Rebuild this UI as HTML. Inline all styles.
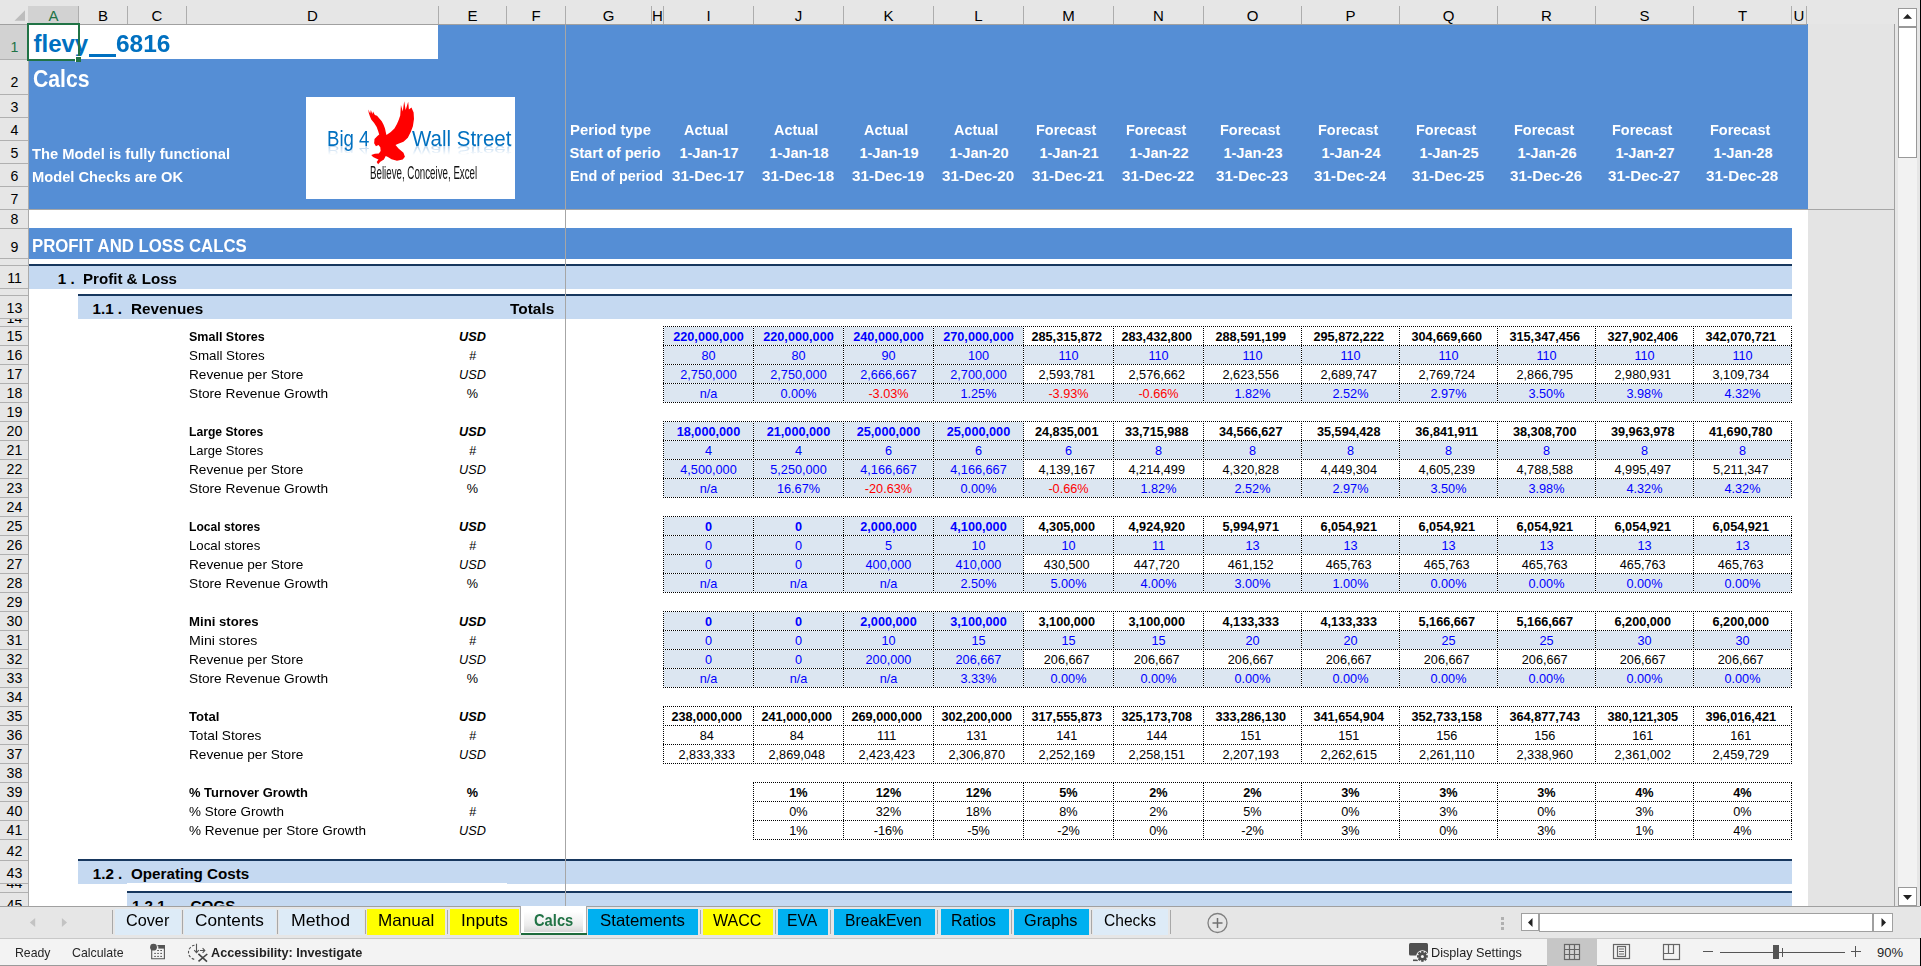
<!DOCTYPE html>
<html><head><meta charset="utf-8"><style>
html,body{margin:0;padding:0;width:1921px;height:966px;overflow:hidden;background:#fff;}
body{position:relative;font-family:"Liberation Sans",sans-serif;}
body>div{position:absolute;box-sizing:content-box;}
.t{white-space:nowrap;line-height:normal;}
.dh{height:0;border-top:1px dotted #000;}
.dv{width:0;border-left:1px dotted #000;}
</style></head><body>
<div style="left:28px;top:24px;width:1780px;height:882px;background:#FFFFFF;"></div>
<div style="left:1808px;top:24px;width:86px;height:882px;background:#E4E4E4;"></div>
<div style="left:28px;top:24px;width:1780px;height:185px;background:#558ED5;"></div>
<div style="left:28px;top:24px;width:410px;height:35px;background:#FFFFFF;"></div>
<div style="left:28px;top:228px;width:1764px;height:31px;background:#558ED5;"></div>
<div style="left:28px;top:264px;width:1764px;height:2px;background:#17375E;"></div>
<div style="left:28px;top:266px;width:1764px;height:23px;background:#C5D9F1;"></div>
<div style="left:78px;top:294px;width:1714px;height:2px;background:#17375E;"></div>
<div style="left:78px;top:296px;width:1714px;height:23px;background:#C5D9F1;"></div>
<div style="left:78px;top:859px;width:1714px;height:2px;background:#17375E;"></div>
<div style="left:78px;top:861px;width:1714px;height:22px;background:#C5D9F1;"></div>
<div style="left:78px;top:883px;width:49px;height:1px;background:#C5D9F1;"></div>
<div style="left:507px;top:883px;width:1285px;height:1px;background:#C5D9F1;"></div>
<div style="left:127px;top:891px;width:1665px;height:2px;background:#17375E;"></div>
<div style="left:127px;top:893px;width:1665px;height:13px;background:#C5D9F1;"></div>
<div class="t" style="left:33.50px;top:30.48px;font-size:24px;color:#0070C0;font-weight:bold;">flevy</div>
<div style="left:89px;top:54px;width:27px;height:3px;background:#0070C0;"></div>
<div class="t" style="left:116.40px;top:30.48px;font-size:24px;color:#0070C0;font-weight:bold;transform:scaleX(1.0207);transform-origin:0 0;">6816</div>
<div class="t" style="left:33.20px;top:65.93px;font-size:23.5px;color:#FFFFFF;font-weight:bold;transform:scaleX(0.9010);transform-origin:0 0;">Calcs</div>
<div class="t" style="left:32.00px;top:145.12px;font-size:15px;color:#FFFFFF;font-weight:bold;transform:scaleX(0.9818);transform-origin:0 0;">The Model is fully functional</div>
<div class="t" style="left:32.00px;top:168.12px;font-size:15px;color:#FFFFFF;font-weight:bold;transform:scaleX(0.9791);transform-origin:0 0;">Model Checks are OK</div>
<div class="t" style="left:32.00px;top:235.76px;font-size:17.5px;color:#FFFFFF;font-weight:bold;transform:scaleX(0.9587);transform-origin:0 0;">PROFIT AND LOSS CALCS</div>
<div class="t" style="left:57.80px;top:270.24px;font-size:15.2px;color:#000;font-weight:bold;">1 .</div>
<div class="t" style="left:82.60px;top:270.24px;font-size:15.2px;color:#000;font-weight:bold;transform:scaleX(0.9938);transform-origin:0 0;">Profit &amp; Loss</div>
<div class="t" style="left:92.50px;top:300.04px;font-size:15.2px;color:#000;font-weight:bold;">1.1 .</div>
<div class="t" style="left:131.20px;top:300.04px;font-size:15.2px;color:#000;font-weight:bold;transform:scaleX(1.0067);transform-origin:0 0;">Revenues</div>
<div class="t" style="left:510.00px;top:300.04px;font-size:15.2px;color:#000;font-weight:bold;transform:scaleX(1.0152);transform-origin:0 0;">Totals</div>
<div class="t" style="left:92.75px;top:865.24px;font-size:15.2px;color:#000;font-weight:bold;">1.2 .</div>
<div class="t" style="left:131.00px;top:865.24px;font-size:15.2px;color:#000;font-weight:bold;">Operating Costs</div>
<div class="t" style="left:131.90px;top:897.24px;font-size:15.2px;color:#000;font-weight:bold;">1.2.1 .</div>
<div class="t" style="left:190.60px;top:897.24px;font-size:15.2px;color:#000;font-weight:bold;">COGS</div>
<div class="t" style="left:569.50px;top:121.79px;font-size:14.6px;color:#FFFFFF;font-weight:bold;transform:scaleX(1.0187);transform-origin:0 0;">Period type</div>
<div class="t" style="left:569.50px;top:144.79px;font-size:14.6px;color:#FFFFFF;font-weight:bold;">Start of perio</div>
<div class="t" style="left:569.50px;top:168.04px;font-size:14.6px;color:#FFFFFF;font-weight:bold;transform:scaleX(0.9885);transform-origin:0 0;">End of period</div>
<div class="t" style="left:684.11px;top:121.79px;font-size:14.6px;color:#FFFFFF;font-weight:bold;transform:scaleX(0.9900);transform-origin:0 0;">Actual</div>
<div class="t" style="left:679.38px;top:144.79px;font-size:14.6px;color:#FFFFFF;font-weight:bold;">1-Jan-17</div>
<div class="t" style="left:672.30px;top:168.04px;font-size:14.6px;color:#FFFFFF;font-weight:bold;transform:scaleX(1.0494);transform-origin:0 0;">31-Dec-17</div>
<div class="t" style="left:774.11px;top:121.79px;font-size:14.6px;color:#FFFFFF;font-weight:bold;transform:scaleX(0.9900);transform-origin:0 0;">Actual</div>
<div class="t" style="left:769.38px;top:144.79px;font-size:14.6px;color:#FFFFFF;font-weight:bold;">1-Jan-18</div>
<div class="t" style="left:762.30px;top:168.04px;font-size:14.6px;color:#FFFFFF;font-weight:bold;transform:scaleX(1.0494);transform-origin:0 0;">31-Dec-18</div>
<div class="t" style="left:864.11px;top:121.79px;font-size:14.6px;color:#FFFFFF;font-weight:bold;transform:scaleX(0.9900);transform-origin:0 0;">Actual</div>
<div class="t" style="left:859.38px;top:144.79px;font-size:14.6px;color:#FFFFFF;font-weight:bold;">1-Jan-19</div>
<div class="t" style="left:852.30px;top:168.04px;font-size:14.6px;color:#FFFFFF;font-weight:bold;transform:scaleX(1.0494);transform-origin:0 0;">31-Dec-19</div>
<div class="t" style="left:954.11px;top:121.79px;font-size:14.6px;color:#FFFFFF;font-weight:bold;transform:scaleX(0.9900);transform-origin:0 0;">Actual</div>
<div class="t" style="left:949.38px;top:144.79px;font-size:14.6px;color:#FFFFFF;font-weight:bold;">1-Jan-20</div>
<div class="t" style="left:942.30px;top:168.04px;font-size:14.6px;color:#FFFFFF;font-weight:bold;transform:scaleX(1.0494);transform-origin:0 0;">31-Dec-20</div>
<div class="t" style="left:1036.07px;top:121.79px;font-size:14.6px;color:#FFFFFF;font-weight:bold;transform:scaleX(0.9900);transform-origin:0 0;">Forecast</div>
<div class="t" style="left:1039.38px;top:144.79px;font-size:14.6px;color:#FFFFFF;font-weight:bold;">1-Jan-21</div>
<div class="t" style="left:1032.30px;top:168.04px;font-size:14.6px;color:#FFFFFF;font-weight:bold;transform:scaleX(1.0494);transform-origin:0 0;">31-Dec-21</div>
<div class="t" style="left:1126.07px;top:121.79px;font-size:14.6px;color:#FFFFFF;font-weight:bold;transform:scaleX(0.9900);transform-origin:0 0;">Forecast</div>
<div class="t" style="left:1129.38px;top:144.79px;font-size:14.6px;color:#FFFFFF;font-weight:bold;">1-Jan-22</div>
<div class="t" style="left:1122.30px;top:168.04px;font-size:14.6px;color:#FFFFFF;font-weight:bold;transform:scaleX(1.0494);transform-origin:0 0;">31-Dec-22</div>
<div class="t" style="left:1220.07px;top:121.79px;font-size:14.6px;color:#FFFFFF;font-weight:bold;transform:scaleX(0.9900);transform-origin:0 0;">Forecast</div>
<div class="t" style="left:1223.38px;top:144.79px;font-size:14.6px;color:#FFFFFF;font-weight:bold;">1-Jan-23</div>
<div class="t" style="left:1216.30px;top:168.04px;font-size:14.6px;color:#FFFFFF;font-weight:bold;transform:scaleX(1.0494);transform-origin:0 0;">31-Dec-23</div>
<div class="t" style="left:1318.07px;top:121.79px;font-size:14.6px;color:#FFFFFF;font-weight:bold;transform:scaleX(0.9900);transform-origin:0 0;">Forecast</div>
<div class="t" style="left:1321.38px;top:144.79px;font-size:14.6px;color:#FFFFFF;font-weight:bold;">1-Jan-24</div>
<div class="t" style="left:1314.30px;top:168.04px;font-size:14.6px;color:#FFFFFF;font-weight:bold;transform:scaleX(1.0494);transform-origin:0 0;">31-Dec-24</div>
<div class="t" style="left:1416.07px;top:121.79px;font-size:14.6px;color:#FFFFFF;font-weight:bold;transform:scaleX(0.9900);transform-origin:0 0;">Forecast</div>
<div class="t" style="left:1419.38px;top:144.79px;font-size:14.6px;color:#FFFFFF;font-weight:bold;">1-Jan-25</div>
<div class="t" style="left:1412.30px;top:168.04px;font-size:14.6px;color:#FFFFFF;font-weight:bold;transform:scaleX(1.0494);transform-origin:0 0;">31-Dec-25</div>
<div class="t" style="left:1514.07px;top:121.79px;font-size:14.6px;color:#FFFFFF;font-weight:bold;transform:scaleX(0.9900);transform-origin:0 0;">Forecast</div>
<div class="t" style="left:1517.38px;top:144.79px;font-size:14.6px;color:#FFFFFF;font-weight:bold;">1-Jan-26</div>
<div class="t" style="left:1510.30px;top:168.04px;font-size:14.6px;color:#FFFFFF;font-weight:bold;transform:scaleX(1.0494);transform-origin:0 0;">31-Dec-26</div>
<div class="t" style="left:1612.07px;top:121.79px;font-size:14.6px;color:#FFFFFF;font-weight:bold;transform:scaleX(0.9900);transform-origin:0 0;">Forecast</div>
<div class="t" style="left:1615.38px;top:144.79px;font-size:14.6px;color:#FFFFFF;font-weight:bold;">1-Jan-27</div>
<div class="t" style="left:1608.30px;top:168.04px;font-size:14.6px;color:#FFFFFF;font-weight:bold;transform:scaleX(1.0494);transform-origin:0 0;">31-Dec-27</div>
<div class="t" style="left:1710.07px;top:121.79px;font-size:14.6px;color:#FFFFFF;font-weight:bold;transform:scaleX(0.9900);transform-origin:0 0;">Forecast</div>
<div class="t" style="left:1713.38px;top:144.79px;font-size:14.6px;color:#FFFFFF;font-weight:bold;">1-Jan-28</div>
<div class="t" style="left:1706.30px;top:168.04px;font-size:14.6px;color:#FFFFFF;font-weight:bold;transform:scaleX(1.0494);transform-origin:0 0;">31-Dec-28</div>
<div class="t" style="left:189.20px;top:329.51px;font-size:12.7px;color:#000;font-weight:bold;transform:scaleX(0.9852);transform-origin:0 0;">Small Stores</div>
<div class="t" style="left:459.09px;top:329.51px;font-size:12.7px;color:#000;font-weight:bold;font-style:italic;">USD</div>
<div class="t" style="left:189.20px;top:348.51px;font-size:12.7px;color:#000;transform:scaleX(1.0529);transform-origin:0 0;">Small Stores</div>
<div class="t" style="left:468.97px;top:348.51px;font-size:12.7px;color:#000;font-style:italic;">#</div>
<div class="t" style="left:189.20px;top:367.51px;font-size:12.7px;color:#000;transform:scaleX(1.0731);transform-origin:0 0;">Revenue per Store</div>
<div class="t" style="left:459.09px;top:367.51px;font-size:12.7px;color:#000;font-style:italic;">USD</div>
<div class="t" style="left:189.20px;top:386.51px;font-size:12.7px;color:#000;transform:scaleX(1.0783);transform-origin:0 0;">Store Revenue Growth</div>
<div class="t" style="left:466.85px;top:386.51px;font-size:12.7px;color:#000;">%</div>
<div class="t" style="left:189.20px;top:424.51px;font-size:12.7px;color:#000;font-weight:bold;transform:scaleX(0.9583);transform-origin:0 0;">Large Stores</div>
<div class="t" style="left:459.09px;top:424.51px;font-size:12.7px;color:#000;font-weight:bold;font-style:italic;">USD</div>
<div class="t" style="left:189.20px;top:443.51px;font-size:12.7px;color:#000;transform:scaleX(1.0231);transform-origin:0 0;">Large Stores</div>
<div class="t" style="left:468.97px;top:443.51px;font-size:12.7px;color:#000;font-style:italic;">#</div>
<div class="t" style="left:189.20px;top:462.51px;font-size:12.7px;color:#000;transform:scaleX(1.0731);transform-origin:0 0;">Revenue per Store</div>
<div class="t" style="left:459.09px;top:462.51px;font-size:12.7px;color:#000;font-style:italic;">USD</div>
<div class="t" style="left:189.20px;top:481.51px;font-size:12.7px;color:#000;transform:scaleX(1.0783);transform-origin:0 0;">Store Revenue Growth</div>
<div class="t" style="left:466.85px;top:481.51px;font-size:12.7px;color:#000;">%</div>
<div class="t" style="left:189.20px;top:519.51px;font-size:12.7px;color:#000;font-weight:bold;transform:scaleX(0.9543);transform-origin:0 0;">Local stores</div>
<div class="t" style="left:459.09px;top:519.51px;font-size:12.7px;color:#000;font-weight:bold;font-style:italic;">USD</div>
<div class="t" style="left:189.20px;top:538.51px;font-size:12.7px;color:#000;transform:scaleX(1.0427);transform-origin:0 0;">Local stores</div>
<div class="t" style="left:468.97px;top:538.51px;font-size:12.7px;color:#000;font-style:italic;">#</div>
<div class="t" style="left:189.20px;top:557.51px;font-size:12.7px;color:#000;transform:scaleX(1.0731);transform-origin:0 0;">Revenue per Store</div>
<div class="t" style="left:459.09px;top:557.51px;font-size:12.7px;color:#000;font-style:italic;">USD</div>
<div class="t" style="left:189.20px;top:576.51px;font-size:12.7px;color:#000;transform:scaleX(1.0783);transform-origin:0 0;">Store Revenue Growth</div>
<div class="t" style="left:466.85px;top:576.51px;font-size:12.7px;color:#000;">%</div>
<div class="t" style="left:189.20px;top:614.51px;font-size:12.7px;color:#000;font-weight:bold;transform:scaleX(1.0382);transform-origin:0 0;">Mini stores</div>
<div class="t" style="left:459.09px;top:614.51px;font-size:12.7px;color:#000;font-weight:bold;font-style:italic;">USD</div>
<div class="t" style="left:189.20px;top:633.51px;font-size:12.7px;color:#000;transform:scaleX(1.1140);transform-origin:0 0;">Mini stores</div>
<div class="t" style="left:468.97px;top:633.51px;font-size:12.7px;color:#000;font-style:italic;">#</div>
<div class="t" style="left:189.20px;top:652.51px;font-size:12.7px;color:#000;transform:scaleX(1.0731);transform-origin:0 0;">Revenue per Store</div>
<div class="t" style="left:459.09px;top:652.51px;font-size:12.7px;color:#000;font-style:italic;">USD</div>
<div class="t" style="left:189.20px;top:671.51px;font-size:12.7px;color:#000;transform:scaleX(1.0783);transform-origin:0 0;">Store Revenue Growth</div>
<div class="t" style="left:466.85px;top:671.51px;font-size:12.7px;color:#000;">%</div>
<div class="t" style="left:189.20px;top:709.51px;font-size:12.7px;color:#000;font-weight:bold;transform:scaleX(1.0342);transform-origin:0 0;">Total</div>
<div class="t" style="left:459.09px;top:709.51px;font-size:12.7px;color:#000;font-weight:bold;font-style:italic;">USD</div>
<div class="t" style="left:189.20px;top:728.51px;font-size:12.7px;color:#000;transform:scaleX(1.0811);transform-origin:0 0;">Total Stores</div>
<div class="t" style="left:468.97px;top:728.51px;font-size:12.7px;color:#000;font-style:italic;">#</div>
<div class="t" style="left:189.20px;top:747.51px;font-size:12.7px;color:#000;transform:scaleX(1.0731);transform-origin:0 0;">Revenue per Store</div>
<div class="t" style="left:459.09px;top:747.51px;font-size:12.7px;color:#000;font-style:italic;">USD</div>
<div class="t" style="left:189.20px;top:785.51px;font-size:12.7px;color:#000;font-weight:bold;transform:scaleX(1.0180);transform-origin:0 0;">% Turnover Growth</div>
<div class="t" style="left:466.85px;top:785.51px;font-size:12.7px;color:#000;font-weight:bold;">%</div>
<div class="t" style="left:189.20px;top:804.51px;font-size:12.7px;color:#000;transform:scaleX(1.0598);transform-origin:0 0;">% Store Growth</div>
<div class="t" style="left:468.97px;top:804.51px;font-size:12.7px;color:#000;font-style:italic;">#</div>
<div class="t" style="left:189.20px;top:823.51px;font-size:12.7px;color:#000;transform:scaleX(1.0676);transform-origin:0 0;">% Revenue per Store Growth</div>
<div class="t" style="left:459.09px;top:823.51px;font-size:12.7px;color:#000;font-style:italic;">USD</div>
<div style="left:664px;top:327px;width:89px;height:18px;background:#DCE6F1;"></div>
<div style="left:754px;top:327px;width:89px;height:18px;background:#DCE6F1;"></div>
<div style="left:844px;top:327px;width:89px;height:18px;background:#DCE6F1;"></div>
<div style="left:934px;top:327px;width:89px;height:18px;background:#DCE6F1;"></div>
<div style="left:664px;top:346px;width:89px;height:18px;background:#DCE6F1;"></div>
<div style="left:754px;top:346px;width:89px;height:18px;background:#DCE6F1;"></div>
<div style="left:844px;top:346px;width:89px;height:18px;background:#DCE6F1;"></div>
<div style="left:934px;top:346px;width:89px;height:18px;background:#DCE6F1;"></div>
<div style="left:1024px;top:346px;width:89px;height:18px;background:#DCE6F1;"></div>
<div style="left:1114px;top:346px;width:89px;height:18px;background:#DCE6F1;"></div>
<div style="left:1204px;top:346px;width:97px;height:18px;background:#DCE6F1;"></div>
<div style="left:1302px;top:346px;width:97px;height:18px;background:#DCE6F1;"></div>
<div style="left:1400px;top:346px;width:97px;height:18px;background:#DCE6F1;"></div>
<div style="left:1498px;top:346px;width:97px;height:18px;background:#DCE6F1;"></div>
<div style="left:1596px;top:346px;width:97px;height:18px;background:#DCE6F1;"></div>
<div style="left:1694px;top:346px;width:97px;height:18px;background:#DCE6F1;"></div>
<div style="left:664px;top:365px;width:89px;height:18px;background:#DCE6F1;"></div>
<div style="left:754px;top:365px;width:89px;height:18px;background:#DCE6F1;"></div>
<div style="left:844px;top:365px;width:89px;height:18px;background:#DCE6F1;"></div>
<div style="left:934px;top:365px;width:89px;height:18px;background:#DCE6F1;"></div>
<div style="left:664px;top:384px;width:89px;height:18px;background:#DCE6F1;"></div>
<div style="left:754px;top:384px;width:89px;height:18px;background:#DCE6F1;"></div>
<div style="left:844px;top:384px;width:89px;height:18px;background:#DCE6F1;"></div>
<div style="left:934px;top:384px;width:89px;height:18px;background:#DCE6F1;"></div>
<div style="left:1024px;top:384px;width:89px;height:18px;background:#DCE6F1;"></div>
<div style="left:1114px;top:384px;width:89px;height:18px;background:#DCE6F1;"></div>
<div style="left:1204px;top:384px;width:97px;height:18px;background:#DCE6F1;"></div>
<div style="left:1302px;top:384px;width:97px;height:18px;background:#DCE6F1;"></div>
<div style="left:1400px;top:384px;width:97px;height:18px;background:#DCE6F1;"></div>
<div style="left:1498px;top:384px;width:97px;height:18px;background:#DCE6F1;"></div>
<div style="left:1596px;top:384px;width:97px;height:18px;background:#DCE6F1;"></div>
<div style="left:1694px;top:384px;width:97px;height:18px;background:#DCE6F1;"></div>
<div class="t" style="left:673.19px;top:329.51px;font-size:12.7px;color:#0000FF;font-weight:bold;">220,000,000</div>
<div class="t" style="left:763.19px;top:329.51px;font-size:12.7px;color:#0000FF;font-weight:bold;">220,000,000</div>
<div class="t" style="left:853.19px;top:329.51px;font-size:12.7px;color:#0000FF;font-weight:bold;">240,000,000</div>
<div class="t" style="left:943.19px;top:329.51px;font-size:12.7px;color:#0000FF;font-weight:bold;">270,000,000</div>
<div class="t" style="left:1031.44px;top:329.51px;font-size:12.7px;color:#000;font-weight:bold;">285,315,872</div>
<div class="t" style="left:1121.44px;top:329.51px;font-size:12.7px;color:#000;font-weight:bold;">283,432,800</div>
<div class="t" style="left:1215.44px;top:329.51px;font-size:12.7px;color:#000;font-weight:bold;">288,591,199</div>
<div class="t" style="left:1313.44px;top:329.51px;font-size:12.7px;color:#000;font-weight:bold;">295,872,222</div>
<div class="t" style="left:1411.44px;top:329.51px;font-size:12.7px;color:#000;font-weight:bold;">304,669,660</div>
<div class="t" style="left:1509.44px;top:329.51px;font-size:12.7px;color:#000;font-weight:bold;">315,347,456</div>
<div class="t" style="left:1607.44px;top:329.51px;font-size:12.7px;color:#000;font-weight:bold;">327,902,406</div>
<div class="t" style="left:1705.44px;top:329.51px;font-size:12.7px;color:#000;font-weight:bold;">342,070,721</div>
<div class="t" style="left:701.44px;top:348.51px;font-size:12.7px;color:#0000FF;">80</div>
<div class="t" style="left:791.44px;top:348.51px;font-size:12.7px;color:#0000FF;">80</div>
<div class="t" style="left:881.44px;top:348.51px;font-size:12.7px;color:#0000FF;">90</div>
<div class="t" style="left:967.90px;top:348.51px;font-size:12.7px;color:#0000FF;">100</div>
<div class="t" style="left:1058.38px;top:348.51px;font-size:12.7px;color:#0000FF;">110</div>
<div class="t" style="left:1148.38px;top:348.51px;font-size:12.7px;color:#0000FF;">110</div>
<div class="t" style="left:1242.38px;top:348.51px;font-size:12.7px;color:#0000FF;">110</div>
<div class="t" style="left:1340.38px;top:348.51px;font-size:12.7px;color:#0000FF;">110</div>
<div class="t" style="left:1438.38px;top:348.51px;font-size:12.7px;color:#0000FF;">110</div>
<div class="t" style="left:1536.38px;top:348.51px;font-size:12.7px;color:#0000FF;">110</div>
<div class="t" style="left:1634.38px;top:348.51px;font-size:12.7px;color:#0000FF;">110</div>
<div class="t" style="left:1732.38px;top:348.51px;font-size:12.7px;color:#0000FF;">110</div>
<div class="t" style="left:680.25px;top:367.51px;font-size:12.7px;color:#0000FF;">2,750,000</div>
<div class="t" style="left:770.25px;top:367.51px;font-size:12.7px;color:#0000FF;">2,750,000</div>
<div class="t" style="left:860.25px;top:367.51px;font-size:12.7px;color:#0000FF;">2,666,667</div>
<div class="t" style="left:950.25px;top:367.51px;font-size:12.7px;color:#0000FF;">2,700,000</div>
<div class="t" style="left:1038.50px;top:367.51px;font-size:12.7px;color:#000;">2,593,781</div>
<div class="t" style="left:1128.50px;top:367.51px;font-size:12.7px;color:#000;">2,576,662</div>
<div class="t" style="left:1222.50px;top:367.51px;font-size:12.7px;color:#000;">2,623,556</div>
<div class="t" style="left:1320.50px;top:367.51px;font-size:12.7px;color:#000;">2,689,747</div>
<div class="t" style="left:1418.50px;top:367.51px;font-size:12.7px;color:#000;">2,769,724</div>
<div class="t" style="left:1516.50px;top:367.51px;font-size:12.7px;color:#000;">2,866,795</div>
<div class="t" style="left:1614.50px;top:367.51px;font-size:12.7px;color:#000;">2,980,931</div>
<div class="t" style="left:1712.50px;top:367.51px;font-size:12.7px;color:#000;">3,109,734</div>
<div class="t" style="left:699.67px;top:386.51px;font-size:12.7px;color:#0000FF;">n/a</div>
<div class="t" style="left:780.49px;top:386.51px;font-size:12.7px;color:#0000FF;">0.00%</div>
<div class="t" style="left:868.38px;top:386.51px;font-size:12.7px;color:#FF0000;">-3.03%</div>
<div class="t" style="left:960.49px;top:386.51px;font-size:12.7px;color:#0000FF;">1.25%</div>
<div class="t" style="left:1048.38px;top:386.51px;font-size:12.7px;color:#FF0000;">-3.93%</div>
<div class="t" style="left:1138.38px;top:386.51px;font-size:12.7px;color:#FF0000;">-0.66%</div>
<div class="t" style="left:1234.49px;top:386.51px;font-size:12.7px;color:#0000FF;">1.82%</div>
<div class="t" style="left:1332.49px;top:386.51px;font-size:12.7px;color:#0000FF;">2.52%</div>
<div class="t" style="left:1430.49px;top:386.51px;font-size:12.7px;color:#0000FF;">2.97%</div>
<div class="t" style="left:1528.49px;top:386.51px;font-size:12.7px;color:#0000FF;">3.50%</div>
<div class="t" style="left:1626.49px;top:386.51px;font-size:12.7px;color:#0000FF;">3.98%</div>
<div class="t" style="left:1724.49px;top:386.51px;font-size:12.7px;color:#0000FF;">4.32%</div>
<div class="dh" style="left:663px;top:326px;width:1129px"></div>
<div class="dh" style="left:663px;top:345px;width:1129px"></div>
<div class="dh" style="left:663px;top:364px;width:1129px"></div>
<div class="dh" style="left:663px;top:383px;width:1129px"></div>
<div class="dh" style="left:663px;top:402px;width:1129px"></div>
<div class="dv" style="left:663px;top:326px;height:77px"></div>
<div class="dv" style="left:753px;top:326px;height:77px"></div>
<div class="dv" style="left:843px;top:326px;height:77px"></div>
<div class="dv" style="left:933px;top:326px;height:77px"></div>
<div class="dv" style="left:1023px;top:326px;height:77px"></div>
<div class="dv" style="left:1113px;top:326px;height:77px"></div>
<div class="dv" style="left:1203px;top:326px;height:77px"></div>
<div class="dv" style="left:1301px;top:326px;height:77px"></div>
<div class="dv" style="left:1399px;top:326px;height:77px"></div>
<div class="dv" style="left:1497px;top:326px;height:77px"></div>
<div class="dv" style="left:1595px;top:326px;height:77px"></div>
<div class="dv" style="left:1693px;top:326px;height:77px"></div>
<div class="dv" style="left:1791px;top:326px;height:77px"></div>
<div style="left:664px;top:422px;width:89px;height:18px;background:#DCE6F1;"></div>
<div style="left:754px;top:422px;width:89px;height:18px;background:#DCE6F1;"></div>
<div style="left:844px;top:422px;width:89px;height:18px;background:#DCE6F1;"></div>
<div style="left:934px;top:422px;width:89px;height:18px;background:#DCE6F1;"></div>
<div style="left:664px;top:441px;width:89px;height:18px;background:#DCE6F1;"></div>
<div style="left:754px;top:441px;width:89px;height:18px;background:#DCE6F1;"></div>
<div style="left:844px;top:441px;width:89px;height:18px;background:#DCE6F1;"></div>
<div style="left:934px;top:441px;width:89px;height:18px;background:#DCE6F1;"></div>
<div style="left:1024px;top:441px;width:89px;height:18px;background:#DCE6F1;"></div>
<div style="left:1114px;top:441px;width:89px;height:18px;background:#DCE6F1;"></div>
<div style="left:1204px;top:441px;width:97px;height:18px;background:#DCE6F1;"></div>
<div style="left:1302px;top:441px;width:97px;height:18px;background:#DCE6F1;"></div>
<div style="left:1400px;top:441px;width:97px;height:18px;background:#DCE6F1;"></div>
<div style="left:1498px;top:441px;width:97px;height:18px;background:#DCE6F1;"></div>
<div style="left:1596px;top:441px;width:97px;height:18px;background:#DCE6F1;"></div>
<div style="left:1694px;top:441px;width:97px;height:18px;background:#DCE6F1;"></div>
<div style="left:664px;top:460px;width:89px;height:18px;background:#DCE6F1;"></div>
<div style="left:754px;top:460px;width:89px;height:18px;background:#DCE6F1;"></div>
<div style="left:844px;top:460px;width:89px;height:18px;background:#DCE6F1;"></div>
<div style="left:934px;top:460px;width:89px;height:18px;background:#DCE6F1;"></div>
<div style="left:664px;top:479px;width:89px;height:18px;background:#DCE6F1;"></div>
<div style="left:754px;top:479px;width:89px;height:18px;background:#DCE6F1;"></div>
<div style="left:844px;top:479px;width:89px;height:18px;background:#DCE6F1;"></div>
<div style="left:934px;top:479px;width:89px;height:18px;background:#DCE6F1;"></div>
<div style="left:1024px;top:479px;width:89px;height:18px;background:#DCE6F1;"></div>
<div style="left:1114px;top:479px;width:89px;height:18px;background:#DCE6F1;"></div>
<div style="left:1204px;top:479px;width:97px;height:18px;background:#DCE6F1;"></div>
<div style="left:1302px;top:479px;width:97px;height:18px;background:#DCE6F1;"></div>
<div style="left:1400px;top:479px;width:97px;height:18px;background:#DCE6F1;"></div>
<div style="left:1498px;top:479px;width:97px;height:18px;background:#DCE6F1;"></div>
<div style="left:1596px;top:479px;width:97px;height:18px;background:#DCE6F1;"></div>
<div style="left:1694px;top:479px;width:97px;height:18px;background:#DCE6F1;"></div>
<div class="t" style="left:676.72px;top:424.51px;font-size:12.7px;color:#0000FF;font-weight:bold;">18,000,000</div>
<div class="t" style="left:766.72px;top:424.51px;font-size:12.7px;color:#0000FF;font-weight:bold;">21,000,000</div>
<div class="t" style="left:856.72px;top:424.51px;font-size:12.7px;color:#0000FF;font-weight:bold;">25,000,000</div>
<div class="t" style="left:946.72px;top:424.51px;font-size:12.7px;color:#0000FF;font-weight:bold;">25,000,000</div>
<div class="t" style="left:1034.97px;top:424.51px;font-size:12.7px;color:#000;font-weight:bold;">24,835,001</div>
<div class="t" style="left:1124.97px;top:424.51px;font-size:12.7px;color:#000;font-weight:bold;">33,715,988</div>
<div class="t" style="left:1218.97px;top:424.51px;font-size:12.7px;color:#000;font-weight:bold;">34,566,627</div>
<div class="t" style="left:1316.97px;top:424.51px;font-size:12.7px;color:#000;font-weight:bold;">35,594,428</div>
<div class="t" style="left:1415.32px;top:424.51px;font-size:12.7px;color:#000;font-weight:bold;">36,841,911</div>
<div class="t" style="left:1512.97px;top:424.51px;font-size:12.7px;color:#000;font-weight:bold;">38,308,700</div>
<div class="t" style="left:1610.97px;top:424.51px;font-size:12.7px;color:#000;font-weight:bold;">39,963,978</div>
<div class="t" style="left:1708.97px;top:424.51px;font-size:12.7px;color:#000;font-weight:bold;">41,690,780</div>
<div class="t" style="left:704.97px;top:443.51px;font-size:12.7px;color:#0000FF;">4</div>
<div class="t" style="left:794.97px;top:443.51px;font-size:12.7px;color:#0000FF;">4</div>
<div class="t" style="left:884.97px;top:443.51px;font-size:12.7px;color:#0000FF;">6</div>
<div class="t" style="left:974.97px;top:443.51px;font-size:12.7px;color:#0000FF;">6</div>
<div class="t" style="left:1064.97px;top:443.51px;font-size:12.7px;color:#0000FF;">6</div>
<div class="t" style="left:1154.97px;top:443.51px;font-size:12.7px;color:#0000FF;">8</div>
<div class="t" style="left:1248.97px;top:443.51px;font-size:12.7px;color:#0000FF;">8</div>
<div class="t" style="left:1346.97px;top:443.51px;font-size:12.7px;color:#0000FF;">8</div>
<div class="t" style="left:1444.97px;top:443.51px;font-size:12.7px;color:#0000FF;">8</div>
<div class="t" style="left:1542.97px;top:443.51px;font-size:12.7px;color:#0000FF;">8</div>
<div class="t" style="left:1640.97px;top:443.51px;font-size:12.7px;color:#0000FF;">8</div>
<div class="t" style="left:1738.97px;top:443.51px;font-size:12.7px;color:#0000FF;">8</div>
<div class="t" style="left:680.25px;top:462.51px;font-size:12.7px;color:#0000FF;">4,500,000</div>
<div class="t" style="left:770.25px;top:462.51px;font-size:12.7px;color:#0000FF;">5,250,000</div>
<div class="t" style="left:860.25px;top:462.51px;font-size:12.7px;color:#0000FF;">4,166,667</div>
<div class="t" style="left:950.25px;top:462.51px;font-size:12.7px;color:#0000FF;">4,166,667</div>
<div class="t" style="left:1038.50px;top:462.51px;font-size:12.7px;color:#000;">4,139,167</div>
<div class="t" style="left:1128.50px;top:462.51px;font-size:12.7px;color:#000;">4,214,499</div>
<div class="t" style="left:1222.50px;top:462.51px;font-size:12.7px;color:#000;">4,320,828</div>
<div class="t" style="left:1320.50px;top:462.51px;font-size:12.7px;color:#000;">4,449,304</div>
<div class="t" style="left:1418.50px;top:462.51px;font-size:12.7px;color:#000;">4,605,239</div>
<div class="t" style="left:1516.50px;top:462.51px;font-size:12.7px;color:#000;">4,788,588</div>
<div class="t" style="left:1614.50px;top:462.51px;font-size:12.7px;color:#000;">4,995,497</div>
<div class="t" style="left:1712.97px;top:462.51px;font-size:12.7px;color:#000;">5,211,347</div>
<div class="t" style="left:699.67px;top:481.51px;font-size:12.7px;color:#0000FF;">n/a</div>
<div class="t" style="left:776.96px;top:481.51px;font-size:12.7px;color:#0000FF;">16.67%</div>
<div class="t" style="left:864.85px;top:481.51px;font-size:12.7px;color:#FF0000;">-20.63%</div>
<div class="t" style="left:960.49px;top:481.51px;font-size:12.7px;color:#0000FF;">0.00%</div>
<div class="t" style="left:1048.38px;top:481.51px;font-size:12.7px;color:#FF0000;">-0.66%</div>
<div class="t" style="left:1140.49px;top:481.51px;font-size:12.7px;color:#0000FF;">1.82%</div>
<div class="t" style="left:1234.49px;top:481.51px;font-size:12.7px;color:#0000FF;">2.52%</div>
<div class="t" style="left:1332.49px;top:481.51px;font-size:12.7px;color:#0000FF;">2.97%</div>
<div class="t" style="left:1430.49px;top:481.51px;font-size:12.7px;color:#0000FF;">3.50%</div>
<div class="t" style="left:1528.49px;top:481.51px;font-size:12.7px;color:#0000FF;">3.98%</div>
<div class="t" style="left:1626.49px;top:481.51px;font-size:12.7px;color:#0000FF;">4.32%</div>
<div class="t" style="left:1724.49px;top:481.51px;font-size:12.7px;color:#0000FF;">4.32%</div>
<div class="dh" style="left:663px;top:421px;width:1129px"></div>
<div class="dh" style="left:663px;top:440px;width:1129px"></div>
<div class="dh" style="left:663px;top:459px;width:1129px"></div>
<div class="dh" style="left:663px;top:478px;width:1129px"></div>
<div class="dh" style="left:663px;top:497px;width:1129px"></div>
<div class="dv" style="left:663px;top:421px;height:77px"></div>
<div class="dv" style="left:753px;top:421px;height:77px"></div>
<div class="dv" style="left:843px;top:421px;height:77px"></div>
<div class="dv" style="left:933px;top:421px;height:77px"></div>
<div class="dv" style="left:1023px;top:421px;height:77px"></div>
<div class="dv" style="left:1113px;top:421px;height:77px"></div>
<div class="dv" style="left:1203px;top:421px;height:77px"></div>
<div class="dv" style="left:1301px;top:421px;height:77px"></div>
<div class="dv" style="left:1399px;top:421px;height:77px"></div>
<div class="dv" style="left:1497px;top:421px;height:77px"></div>
<div class="dv" style="left:1595px;top:421px;height:77px"></div>
<div class="dv" style="left:1693px;top:421px;height:77px"></div>
<div class="dv" style="left:1791px;top:421px;height:77px"></div>
<div style="left:664px;top:517px;width:89px;height:18px;background:#DCE6F1;"></div>
<div style="left:754px;top:517px;width:89px;height:18px;background:#DCE6F1;"></div>
<div style="left:844px;top:517px;width:89px;height:18px;background:#DCE6F1;"></div>
<div style="left:934px;top:517px;width:89px;height:18px;background:#DCE6F1;"></div>
<div style="left:664px;top:536px;width:89px;height:18px;background:#DCE6F1;"></div>
<div style="left:754px;top:536px;width:89px;height:18px;background:#DCE6F1;"></div>
<div style="left:844px;top:536px;width:89px;height:18px;background:#DCE6F1;"></div>
<div style="left:934px;top:536px;width:89px;height:18px;background:#DCE6F1;"></div>
<div style="left:1024px;top:536px;width:89px;height:18px;background:#DCE6F1;"></div>
<div style="left:1114px;top:536px;width:89px;height:18px;background:#DCE6F1;"></div>
<div style="left:1204px;top:536px;width:97px;height:18px;background:#DCE6F1;"></div>
<div style="left:1302px;top:536px;width:97px;height:18px;background:#DCE6F1;"></div>
<div style="left:1400px;top:536px;width:97px;height:18px;background:#DCE6F1;"></div>
<div style="left:1498px;top:536px;width:97px;height:18px;background:#DCE6F1;"></div>
<div style="left:1596px;top:536px;width:97px;height:18px;background:#DCE6F1;"></div>
<div style="left:1694px;top:536px;width:97px;height:18px;background:#DCE6F1;"></div>
<div style="left:664px;top:555px;width:89px;height:18px;background:#DCE6F1;"></div>
<div style="left:754px;top:555px;width:89px;height:18px;background:#DCE6F1;"></div>
<div style="left:844px;top:555px;width:89px;height:18px;background:#DCE6F1;"></div>
<div style="left:934px;top:555px;width:89px;height:18px;background:#DCE6F1;"></div>
<div style="left:664px;top:574px;width:89px;height:18px;background:#DCE6F1;"></div>
<div style="left:754px;top:574px;width:89px;height:18px;background:#DCE6F1;"></div>
<div style="left:844px;top:574px;width:89px;height:18px;background:#DCE6F1;"></div>
<div style="left:934px;top:574px;width:89px;height:18px;background:#DCE6F1;"></div>
<div style="left:1024px;top:574px;width:89px;height:18px;background:#DCE6F1;"></div>
<div style="left:1114px;top:574px;width:89px;height:18px;background:#DCE6F1;"></div>
<div style="left:1204px;top:574px;width:97px;height:18px;background:#DCE6F1;"></div>
<div style="left:1302px;top:574px;width:97px;height:18px;background:#DCE6F1;"></div>
<div style="left:1400px;top:574px;width:97px;height:18px;background:#DCE6F1;"></div>
<div style="left:1498px;top:574px;width:97px;height:18px;background:#DCE6F1;"></div>
<div style="left:1596px;top:574px;width:97px;height:18px;background:#DCE6F1;"></div>
<div style="left:1694px;top:574px;width:97px;height:18px;background:#DCE6F1;"></div>
<div class="t" style="left:704.97px;top:519.51px;font-size:12.7px;color:#0000FF;font-weight:bold;">0</div>
<div class="t" style="left:794.97px;top:519.51px;font-size:12.7px;color:#0000FF;font-weight:bold;">0</div>
<div class="t" style="left:860.25px;top:519.51px;font-size:12.7px;color:#0000FF;font-weight:bold;">2,000,000</div>
<div class="t" style="left:950.25px;top:519.51px;font-size:12.7px;color:#0000FF;font-weight:bold;">4,100,000</div>
<div class="t" style="left:1038.50px;top:519.51px;font-size:12.7px;color:#000;font-weight:bold;">4,305,000</div>
<div class="t" style="left:1128.50px;top:519.51px;font-size:12.7px;color:#000;font-weight:bold;">4,924,920</div>
<div class="t" style="left:1222.50px;top:519.51px;font-size:12.7px;color:#000;font-weight:bold;">5,994,971</div>
<div class="t" style="left:1320.50px;top:519.51px;font-size:12.7px;color:#000;font-weight:bold;">6,054,921</div>
<div class="t" style="left:1418.50px;top:519.51px;font-size:12.7px;color:#000;font-weight:bold;">6,054,921</div>
<div class="t" style="left:1516.50px;top:519.51px;font-size:12.7px;color:#000;font-weight:bold;">6,054,921</div>
<div class="t" style="left:1614.50px;top:519.51px;font-size:12.7px;color:#000;font-weight:bold;">6,054,921</div>
<div class="t" style="left:1712.50px;top:519.51px;font-size:12.7px;color:#000;font-weight:bold;">6,054,921</div>
<div class="t" style="left:704.97px;top:538.51px;font-size:12.7px;color:#0000FF;">0</div>
<div class="t" style="left:794.97px;top:538.51px;font-size:12.7px;color:#0000FF;">0</div>
<div class="t" style="left:884.97px;top:538.51px;font-size:12.7px;color:#0000FF;">5</div>
<div class="t" style="left:971.44px;top:538.51px;font-size:12.7px;color:#0000FF;">10</div>
<div class="t" style="left:1061.44px;top:538.51px;font-size:12.7px;color:#0000FF;">10</div>
<div class="t" style="left:1151.91px;top:538.51px;font-size:12.7px;color:#0000FF;">11</div>
<div class="t" style="left:1245.44px;top:538.51px;font-size:12.7px;color:#0000FF;">13</div>
<div class="t" style="left:1343.44px;top:538.51px;font-size:12.7px;color:#0000FF;">13</div>
<div class="t" style="left:1441.44px;top:538.51px;font-size:12.7px;color:#0000FF;">13</div>
<div class="t" style="left:1539.44px;top:538.51px;font-size:12.7px;color:#0000FF;">13</div>
<div class="t" style="left:1637.44px;top:538.51px;font-size:12.7px;color:#0000FF;">13</div>
<div class="t" style="left:1735.44px;top:538.51px;font-size:12.7px;color:#0000FF;">13</div>
<div class="t" style="left:704.97px;top:557.51px;font-size:12.7px;color:#0000FF;">0</div>
<div class="t" style="left:794.97px;top:557.51px;font-size:12.7px;color:#0000FF;">0</div>
<div class="t" style="left:865.55px;top:557.51px;font-size:12.7px;color:#0000FF;">400,000</div>
<div class="t" style="left:955.55px;top:557.51px;font-size:12.7px;color:#0000FF;">410,000</div>
<div class="t" style="left:1043.80px;top:557.51px;font-size:12.7px;color:#000;">430,500</div>
<div class="t" style="left:1133.80px;top:557.51px;font-size:12.7px;color:#000;">447,720</div>
<div class="t" style="left:1227.80px;top:557.51px;font-size:12.7px;color:#000;">461,152</div>
<div class="t" style="left:1325.80px;top:557.51px;font-size:12.7px;color:#000;">465,763</div>
<div class="t" style="left:1423.80px;top:557.51px;font-size:12.7px;color:#000;">465,763</div>
<div class="t" style="left:1521.80px;top:557.51px;font-size:12.7px;color:#000;">465,763</div>
<div class="t" style="left:1619.80px;top:557.51px;font-size:12.7px;color:#000;">465,763</div>
<div class="t" style="left:1717.80px;top:557.51px;font-size:12.7px;color:#000;">465,763</div>
<div class="t" style="left:699.67px;top:576.51px;font-size:12.7px;color:#0000FF;">n/a</div>
<div class="t" style="left:789.67px;top:576.51px;font-size:12.7px;color:#0000FF;">n/a</div>
<div class="t" style="left:879.67px;top:576.51px;font-size:12.7px;color:#0000FF;">n/a</div>
<div class="t" style="left:960.49px;top:576.51px;font-size:12.7px;color:#0000FF;">2.50%</div>
<div class="t" style="left:1050.49px;top:576.51px;font-size:12.7px;color:#0000FF;">5.00%</div>
<div class="t" style="left:1140.49px;top:576.51px;font-size:12.7px;color:#0000FF;">4.00%</div>
<div class="t" style="left:1234.49px;top:576.51px;font-size:12.7px;color:#0000FF;">3.00%</div>
<div class="t" style="left:1332.49px;top:576.51px;font-size:12.7px;color:#0000FF;">1.00%</div>
<div class="t" style="left:1430.49px;top:576.51px;font-size:12.7px;color:#0000FF;">0.00%</div>
<div class="t" style="left:1528.49px;top:576.51px;font-size:12.7px;color:#0000FF;">0.00%</div>
<div class="t" style="left:1626.49px;top:576.51px;font-size:12.7px;color:#0000FF;">0.00%</div>
<div class="t" style="left:1724.49px;top:576.51px;font-size:12.7px;color:#0000FF;">0.00%</div>
<div class="dh" style="left:663px;top:516px;width:1129px"></div>
<div class="dh" style="left:663px;top:535px;width:1129px"></div>
<div class="dh" style="left:663px;top:554px;width:1129px"></div>
<div class="dh" style="left:663px;top:573px;width:1129px"></div>
<div class="dh" style="left:663px;top:592px;width:1129px"></div>
<div class="dv" style="left:663px;top:516px;height:77px"></div>
<div class="dv" style="left:753px;top:516px;height:77px"></div>
<div class="dv" style="left:843px;top:516px;height:77px"></div>
<div class="dv" style="left:933px;top:516px;height:77px"></div>
<div class="dv" style="left:1023px;top:516px;height:77px"></div>
<div class="dv" style="left:1113px;top:516px;height:77px"></div>
<div class="dv" style="left:1203px;top:516px;height:77px"></div>
<div class="dv" style="left:1301px;top:516px;height:77px"></div>
<div class="dv" style="left:1399px;top:516px;height:77px"></div>
<div class="dv" style="left:1497px;top:516px;height:77px"></div>
<div class="dv" style="left:1595px;top:516px;height:77px"></div>
<div class="dv" style="left:1693px;top:516px;height:77px"></div>
<div class="dv" style="left:1791px;top:516px;height:77px"></div>
<div style="left:664px;top:612px;width:89px;height:18px;background:#DCE6F1;"></div>
<div style="left:754px;top:612px;width:89px;height:18px;background:#DCE6F1;"></div>
<div style="left:844px;top:612px;width:89px;height:18px;background:#DCE6F1;"></div>
<div style="left:934px;top:612px;width:89px;height:18px;background:#DCE6F1;"></div>
<div style="left:664px;top:631px;width:89px;height:18px;background:#DCE6F1;"></div>
<div style="left:754px;top:631px;width:89px;height:18px;background:#DCE6F1;"></div>
<div style="left:844px;top:631px;width:89px;height:18px;background:#DCE6F1;"></div>
<div style="left:934px;top:631px;width:89px;height:18px;background:#DCE6F1;"></div>
<div style="left:1024px;top:631px;width:89px;height:18px;background:#DCE6F1;"></div>
<div style="left:1114px;top:631px;width:89px;height:18px;background:#DCE6F1;"></div>
<div style="left:1204px;top:631px;width:97px;height:18px;background:#DCE6F1;"></div>
<div style="left:1302px;top:631px;width:97px;height:18px;background:#DCE6F1;"></div>
<div style="left:1400px;top:631px;width:97px;height:18px;background:#DCE6F1;"></div>
<div style="left:1498px;top:631px;width:97px;height:18px;background:#DCE6F1;"></div>
<div style="left:1596px;top:631px;width:97px;height:18px;background:#DCE6F1;"></div>
<div style="left:1694px;top:631px;width:97px;height:18px;background:#DCE6F1;"></div>
<div style="left:664px;top:650px;width:89px;height:18px;background:#DCE6F1;"></div>
<div style="left:754px;top:650px;width:89px;height:18px;background:#DCE6F1;"></div>
<div style="left:844px;top:650px;width:89px;height:18px;background:#DCE6F1;"></div>
<div style="left:934px;top:650px;width:89px;height:18px;background:#DCE6F1;"></div>
<div style="left:664px;top:669px;width:89px;height:18px;background:#DCE6F1;"></div>
<div style="left:754px;top:669px;width:89px;height:18px;background:#DCE6F1;"></div>
<div style="left:844px;top:669px;width:89px;height:18px;background:#DCE6F1;"></div>
<div style="left:934px;top:669px;width:89px;height:18px;background:#DCE6F1;"></div>
<div style="left:1024px;top:669px;width:89px;height:18px;background:#DCE6F1;"></div>
<div style="left:1114px;top:669px;width:89px;height:18px;background:#DCE6F1;"></div>
<div style="left:1204px;top:669px;width:97px;height:18px;background:#DCE6F1;"></div>
<div style="left:1302px;top:669px;width:97px;height:18px;background:#DCE6F1;"></div>
<div style="left:1400px;top:669px;width:97px;height:18px;background:#DCE6F1;"></div>
<div style="left:1498px;top:669px;width:97px;height:18px;background:#DCE6F1;"></div>
<div style="left:1596px;top:669px;width:97px;height:18px;background:#DCE6F1;"></div>
<div style="left:1694px;top:669px;width:97px;height:18px;background:#DCE6F1;"></div>
<div class="t" style="left:704.97px;top:614.51px;font-size:12.7px;color:#0000FF;font-weight:bold;">0</div>
<div class="t" style="left:794.97px;top:614.51px;font-size:12.7px;color:#0000FF;font-weight:bold;">0</div>
<div class="t" style="left:860.25px;top:614.51px;font-size:12.7px;color:#0000FF;font-weight:bold;">2,000,000</div>
<div class="t" style="left:950.25px;top:614.51px;font-size:12.7px;color:#0000FF;font-weight:bold;">3,100,000</div>
<div class="t" style="left:1038.50px;top:614.51px;font-size:12.7px;color:#000;font-weight:bold;">3,100,000</div>
<div class="t" style="left:1128.50px;top:614.51px;font-size:12.7px;color:#000;font-weight:bold;">3,100,000</div>
<div class="t" style="left:1222.50px;top:614.51px;font-size:12.7px;color:#000;font-weight:bold;">4,133,333</div>
<div class="t" style="left:1320.50px;top:614.51px;font-size:12.7px;color:#000;font-weight:bold;">4,133,333</div>
<div class="t" style="left:1418.50px;top:614.51px;font-size:12.7px;color:#000;font-weight:bold;">5,166,667</div>
<div class="t" style="left:1516.50px;top:614.51px;font-size:12.7px;color:#000;font-weight:bold;">5,166,667</div>
<div class="t" style="left:1614.50px;top:614.51px;font-size:12.7px;color:#000;font-weight:bold;">6,200,000</div>
<div class="t" style="left:1712.50px;top:614.51px;font-size:12.7px;color:#000;font-weight:bold;">6,200,000</div>
<div class="t" style="left:704.97px;top:633.51px;font-size:12.7px;color:#0000FF;">0</div>
<div class="t" style="left:794.97px;top:633.51px;font-size:12.7px;color:#0000FF;">0</div>
<div class="t" style="left:881.44px;top:633.51px;font-size:12.7px;color:#0000FF;">10</div>
<div class="t" style="left:971.44px;top:633.51px;font-size:12.7px;color:#0000FF;">15</div>
<div class="t" style="left:1061.44px;top:633.51px;font-size:12.7px;color:#0000FF;">15</div>
<div class="t" style="left:1151.44px;top:633.51px;font-size:12.7px;color:#0000FF;">15</div>
<div class="t" style="left:1245.44px;top:633.51px;font-size:12.7px;color:#0000FF;">20</div>
<div class="t" style="left:1343.44px;top:633.51px;font-size:12.7px;color:#0000FF;">20</div>
<div class="t" style="left:1441.44px;top:633.51px;font-size:12.7px;color:#0000FF;">25</div>
<div class="t" style="left:1539.44px;top:633.51px;font-size:12.7px;color:#0000FF;">25</div>
<div class="t" style="left:1637.44px;top:633.51px;font-size:12.7px;color:#0000FF;">30</div>
<div class="t" style="left:1735.44px;top:633.51px;font-size:12.7px;color:#0000FF;">30</div>
<div class="t" style="left:704.97px;top:652.51px;font-size:12.7px;color:#0000FF;">0</div>
<div class="t" style="left:794.97px;top:652.51px;font-size:12.7px;color:#0000FF;">0</div>
<div class="t" style="left:865.55px;top:652.51px;font-size:12.7px;color:#0000FF;">200,000</div>
<div class="t" style="left:955.55px;top:652.51px;font-size:12.7px;color:#0000FF;">206,667</div>
<div class="t" style="left:1043.80px;top:652.51px;font-size:12.7px;color:#000;">206,667</div>
<div class="t" style="left:1133.80px;top:652.51px;font-size:12.7px;color:#000;">206,667</div>
<div class="t" style="left:1227.80px;top:652.51px;font-size:12.7px;color:#000;">206,667</div>
<div class="t" style="left:1325.80px;top:652.51px;font-size:12.7px;color:#000;">206,667</div>
<div class="t" style="left:1423.80px;top:652.51px;font-size:12.7px;color:#000;">206,667</div>
<div class="t" style="left:1521.80px;top:652.51px;font-size:12.7px;color:#000;">206,667</div>
<div class="t" style="left:1619.80px;top:652.51px;font-size:12.7px;color:#000;">206,667</div>
<div class="t" style="left:1717.80px;top:652.51px;font-size:12.7px;color:#000;">206,667</div>
<div class="t" style="left:699.67px;top:671.51px;font-size:12.7px;color:#0000FF;">n/a</div>
<div class="t" style="left:789.67px;top:671.51px;font-size:12.7px;color:#0000FF;">n/a</div>
<div class="t" style="left:879.67px;top:671.51px;font-size:12.7px;color:#0000FF;">n/a</div>
<div class="t" style="left:960.49px;top:671.51px;font-size:12.7px;color:#0000FF;">3.33%</div>
<div class="t" style="left:1050.49px;top:671.51px;font-size:12.7px;color:#0000FF;">0.00%</div>
<div class="t" style="left:1140.49px;top:671.51px;font-size:12.7px;color:#0000FF;">0.00%</div>
<div class="t" style="left:1234.49px;top:671.51px;font-size:12.7px;color:#0000FF;">0.00%</div>
<div class="t" style="left:1332.49px;top:671.51px;font-size:12.7px;color:#0000FF;">0.00%</div>
<div class="t" style="left:1430.49px;top:671.51px;font-size:12.7px;color:#0000FF;">0.00%</div>
<div class="t" style="left:1528.49px;top:671.51px;font-size:12.7px;color:#0000FF;">0.00%</div>
<div class="t" style="left:1626.49px;top:671.51px;font-size:12.7px;color:#0000FF;">0.00%</div>
<div class="t" style="left:1724.49px;top:671.51px;font-size:12.7px;color:#0000FF;">0.00%</div>
<div class="dh" style="left:663px;top:611px;width:1129px"></div>
<div class="dh" style="left:663px;top:630px;width:1129px"></div>
<div class="dh" style="left:663px;top:649px;width:1129px"></div>
<div class="dh" style="left:663px;top:668px;width:1129px"></div>
<div class="dh" style="left:663px;top:687px;width:1129px"></div>
<div class="dv" style="left:663px;top:611px;height:77px"></div>
<div class="dv" style="left:753px;top:611px;height:77px"></div>
<div class="dv" style="left:843px;top:611px;height:77px"></div>
<div class="dv" style="left:933px;top:611px;height:77px"></div>
<div class="dv" style="left:1023px;top:611px;height:77px"></div>
<div class="dv" style="left:1113px;top:611px;height:77px"></div>
<div class="dv" style="left:1203px;top:611px;height:77px"></div>
<div class="dv" style="left:1301px;top:611px;height:77px"></div>
<div class="dv" style="left:1399px;top:611px;height:77px"></div>
<div class="dv" style="left:1497px;top:611px;height:77px"></div>
<div class="dv" style="left:1595px;top:611px;height:77px"></div>
<div class="dv" style="left:1693px;top:611px;height:77px"></div>
<div class="dv" style="left:1791px;top:611px;height:77px"></div>
<div class="t" style="left:671.44px;top:709.51px;font-size:12.7px;color:#000;font-weight:bold;">238,000,000</div>
<div class="t" style="left:761.44px;top:709.51px;font-size:12.7px;color:#000;font-weight:bold;">241,000,000</div>
<div class="t" style="left:851.44px;top:709.51px;font-size:12.7px;color:#000;font-weight:bold;">269,000,000</div>
<div class="t" style="left:941.44px;top:709.51px;font-size:12.7px;color:#000;font-weight:bold;">302,200,000</div>
<div class="t" style="left:1031.44px;top:709.51px;font-size:12.7px;color:#000;font-weight:bold;">317,555,873</div>
<div class="t" style="left:1121.44px;top:709.51px;font-size:12.7px;color:#000;font-weight:bold;">325,173,708</div>
<div class="t" style="left:1215.44px;top:709.51px;font-size:12.7px;color:#000;font-weight:bold;">333,286,130</div>
<div class="t" style="left:1313.44px;top:709.51px;font-size:12.7px;color:#000;font-weight:bold;">341,654,904</div>
<div class="t" style="left:1411.44px;top:709.51px;font-size:12.7px;color:#000;font-weight:bold;">352,733,158</div>
<div class="t" style="left:1509.44px;top:709.51px;font-size:12.7px;color:#000;font-weight:bold;">364,877,743</div>
<div class="t" style="left:1607.44px;top:709.51px;font-size:12.7px;color:#000;font-weight:bold;">380,121,305</div>
<div class="t" style="left:1705.44px;top:709.51px;font-size:12.7px;color:#000;font-weight:bold;">396,016,421</div>
<div class="t" style="left:699.69px;top:728.51px;font-size:12.7px;color:#000;">84</div>
<div class="t" style="left:789.69px;top:728.51px;font-size:12.7px;color:#000;">84</div>
<div class="t" style="left:877.10px;top:728.51px;font-size:12.7px;color:#000;">111</div>
<div class="t" style="left:966.15px;top:728.51px;font-size:12.7px;color:#000;">131</div>
<div class="t" style="left:1056.15px;top:728.51px;font-size:12.7px;color:#000;">141</div>
<div class="t" style="left:1146.15px;top:728.51px;font-size:12.7px;color:#000;">144</div>
<div class="t" style="left:1240.15px;top:728.51px;font-size:12.7px;color:#000;">151</div>
<div class="t" style="left:1338.15px;top:728.51px;font-size:12.7px;color:#000;">151</div>
<div class="t" style="left:1436.15px;top:728.51px;font-size:12.7px;color:#000;">156</div>
<div class="t" style="left:1534.15px;top:728.51px;font-size:12.7px;color:#000;">156</div>
<div class="t" style="left:1632.15px;top:728.51px;font-size:12.7px;color:#000;">161</div>
<div class="t" style="left:1730.15px;top:728.51px;font-size:12.7px;color:#000;">161</div>
<div class="t" style="left:678.50px;top:747.51px;font-size:12.7px;color:#000;">2,833,333</div>
<div class="t" style="left:768.50px;top:747.51px;font-size:12.7px;color:#000;">2,869,048</div>
<div class="t" style="left:858.50px;top:747.51px;font-size:12.7px;color:#000;">2,423,423</div>
<div class="t" style="left:948.50px;top:747.51px;font-size:12.7px;color:#000;">2,306,870</div>
<div class="t" style="left:1038.50px;top:747.51px;font-size:12.7px;color:#000;">2,252,169</div>
<div class="t" style="left:1128.50px;top:747.51px;font-size:12.7px;color:#000;">2,258,151</div>
<div class="t" style="left:1222.50px;top:747.51px;font-size:12.7px;color:#000;">2,207,193</div>
<div class="t" style="left:1320.50px;top:747.51px;font-size:12.7px;color:#000;">2,262,615</div>
<div class="t" style="left:1418.97px;top:747.51px;font-size:12.7px;color:#000;">2,261,110</div>
<div class="t" style="left:1516.50px;top:747.51px;font-size:12.7px;color:#000;">2,338,960</div>
<div class="t" style="left:1614.50px;top:747.51px;font-size:12.7px;color:#000;">2,361,002</div>
<div class="t" style="left:1712.50px;top:747.51px;font-size:12.7px;color:#000;">2,459,729</div>
<div class="dh" style="left:663px;top:706px;width:1129px"></div>
<div class="dh" style="left:663px;top:725px;width:1129px"></div>
<div class="dh" style="left:663px;top:744px;width:1129px"></div>
<div class="dh" style="left:663px;top:763px;width:1129px"></div>
<div class="dv" style="left:663px;top:706px;height:58px"></div>
<div class="dv" style="left:753px;top:706px;height:58px"></div>
<div class="dv" style="left:843px;top:706px;height:58px"></div>
<div class="dv" style="left:933px;top:706px;height:58px"></div>
<div class="dv" style="left:1023px;top:706px;height:58px"></div>
<div class="dv" style="left:1113px;top:706px;height:58px"></div>
<div class="dv" style="left:1203px;top:706px;height:58px"></div>
<div class="dv" style="left:1301px;top:706px;height:58px"></div>
<div class="dv" style="left:1399px;top:706px;height:58px"></div>
<div class="dv" style="left:1497px;top:706px;height:58px"></div>
<div class="dv" style="left:1595px;top:706px;height:58px"></div>
<div class="dv" style="left:1693px;top:706px;height:58px"></div>
<div class="dv" style="left:1791px;top:706px;height:58px"></div>
<div class="t" style="left:789.32px;top:785.51px;font-size:12.7px;color:#000;font-weight:bold;">1%</div>
<div class="t" style="left:875.79px;top:785.51px;font-size:12.7px;color:#000;font-weight:bold;">12%</div>
<div class="t" style="left:965.79px;top:785.51px;font-size:12.7px;color:#000;font-weight:bold;">12%</div>
<div class="t" style="left:1059.32px;top:785.51px;font-size:12.7px;color:#000;font-weight:bold;">5%</div>
<div class="t" style="left:1149.32px;top:785.51px;font-size:12.7px;color:#000;font-weight:bold;">2%</div>
<div class="t" style="left:1243.32px;top:785.51px;font-size:12.7px;color:#000;font-weight:bold;">2%</div>
<div class="t" style="left:1341.32px;top:785.51px;font-size:12.7px;color:#000;font-weight:bold;">3%</div>
<div class="t" style="left:1439.32px;top:785.51px;font-size:12.7px;color:#000;font-weight:bold;">3%</div>
<div class="t" style="left:1537.32px;top:785.51px;font-size:12.7px;color:#000;font-weight:bold;">3%</div>
<div class="t" style="left:1635.32px;top:785.51px;font-size:12.7px;color:#000;font-weight:bold;">4%</div>
<div class="t" style="left:1733.32px;top:785.51px;font-size:12.7px;color:#000;font-weight:bold;">4%</div>
<div class="t" style="left:789.32px;top:804.51px;font-size:12.7px;color:#000;">0%</div>
<div class="t" style="left:875.79px;top:804.51px;font-size:12.7px;color:#000;">32%</div>
<div class="t" style="left:965.79px;top:804.51px;font-size:12.7px;color:#000;">18%</div>
<div class="t" style="left:1059.32px;top:804.51px;font-size:12.7px;color:#000;">8%</div>
<div class="t" style="left:1149.32px;top:804.51px;font-size:12.7px;color:#000;">2%</div>
<div class="t" style="left:1243.32px;top:804.51px;font-size:12.7px;color:#000;">5%</div>
<div class="t" style="left:1341.32px;top:804.51px;font-size:12.7px;color:#000;">0%</div>
<div class="t" style="left:1439.32px;top:804.51px;font-size:12.7px;color:#000;">3%</div>
<div class="t" style="left:1537.32px;top:804.51px;font-size:12.7px;color:#000;">0%</div>
<div class="t" style="left:1635.32px;top:804.51px;font-size:12.7px;color:#000;">3%</div>
<div class="t" style="left:1733.32px;top:804.51px;font-size:12.7px;color:#000;">0%</div>
<div class="t" style="left:789.32px;top:823.51px;font-size:12.7px;color:#000;">1%</div>
<div class="t" style="left:873.68px;top:823.51px;font-size:12.7px;color:#000;">-16%</div>
<div class="t" style="left:967.21px;top:823.51px;font-size:12.7px;color:#000;">-5%</div>
<div class="t" style="left:1057.21px;top:823.51px;font-size:12.7px;color:#000;">-2%</div>
<div class="t" style="left:1149.32px;top:823.51px;font-size:12.7px;color:#000;">0%</div>
<div class="t" style="left:1241.21px;top:823.51px;font-size:12.7px;color:#000;">-2%</div>
<div class="t" style="left:1341.32px;top:823.51px;font-size:12.7px;color:#000;">3%</div>
<div class="t" style="left:1439.32px;top:823.51px;font-size:12.7px;color:#000;">0%</div>
<div class="t" style="left:1537.32px;top:823.51px;font-size:12.7px;color:#000;">3%</div>
<div class="t" style="left:1635.32px;top:823.51px;font-size:12.7px;color:#000;">1%</div>
<div class="t" style="left:1733.32px;top:823.51px;font-size:12.7px;color:#000;">4%</div>
<div class="dh" style="left:753px;top:782px;width:1039px"></div>
<div class="dh" style="left:753px;top:801px;width:1039px"></div>
<div class="dh" style="left:753px;top:820px;width:1039px"></div>
<div class="dh" style="left:753px;top:839px;width:1039px"></div>
<div class="dv" style="left:753px;top:782px;height:58px"></div>
<div class="dv" style="left:843px;top:782px;height:58px"></div>
<div class="dv" style="left:933px;top:782px;height:58px"></div>
<div class="dv" style="left:1023px;top:782px;height:58px"></div>
<div class="dv" style="left:1113px;top:782px;height:58px"></div>
<div class="dv" style="left:1203px;top:782px;height:58px"></div>
<div class="dv" style="left:1301px;top:782px;height:58px"></div>
<div class="dv" style="left:1399px;top:782px;height:58px"></div>
<div class="dv" style="left:1497px;top:782px;height:58px"></div>
<div class="dv" style="left:1595px;top:782px;height:58px"></div>
<div class="dv" style="left:1693px;top:782px;height:58px"></div>
<div class="dv" style="left:1791px;top:782px;height:58px"></div>
<div style="left:565px;top:24px;width:1px;height:882px;background:#A6A6A6;"></div>
<div style="left:28px;top:209px;width:1866px;height:1px;background:#A6A6A6;"></div>
<div style="left:306px;top:97px;width:209px;height:102px;background:#FFFFFF;"></div>
<div style="left:324.7px;top:146px;width:46.3px;height:9px;overflow:hidden;-webkit-mask-image:linear-gradient(rgba(0,0,0,0.45),rgba(0,0,0,0));"><div class="t" style="position:absolute;left:2px;top:-19.91px;font-size:22px;color:#5B9BD5;transform:scale(0.8435,-0.6);transform-origin:0 19.91px">Big 4</div></div>
<div class="t" style="left:326.70px;top:126.39px;font-size:22px;color:#0070C0;transform:scaleX(0.8435);transform-origin:0 0;">Big 4</div>
<div style="left:409.8px;top:146px;width:103.4px;height:9px;overflow:hidden;-webkit-mask-image:linear-gradient(rgba(0,0,0,0.45),rgba(0,0,0,0));"><div class="t" style="position:absolute;left:2px;top:-19.91px;font-size:22px;color:#5B9BD5;transform:scale(0.9310,-0.6);transform-origin:0 19.91px">Wall Street</div></div>
<div class="t" style="left:411.80px;top:126.39px;font-size:22px;color:#0070C0;transform:scaleX(0.9310);transform-origin:0 0;">Wall Street</div>
<div class="t" style="left:369.80px;top:161.86px;font-size:18.5px;color:#111;transform:scaleX(0.5265);transform-origin:0 0;">Believe, Conceive, Excel</div>
<svg style="position:absolute;left:364px;top:98px" width="56" height="70" viewBox="0 0 773 966"><path fill="#FF0000" d="M60 160 L85 215 L95 165 L115 220 L125 185 L150 235 L180 245 L215 285 L245 320 L270 370 L290 420 L300 470 L310 510 L370 470 L420 420 L455 360 L480 300 L500 240 L510 95 L535 185 L555 45 L575 165 L610 50 L620 160 L655 130 L685 200 L690 290 L675 390 L645 470 L605 550 L545 605 L465 635 L435 650 L480 700 L545 755 L565 810 L535 850 L455 865 L380 845 L330 815 L300 800 L275 850 L225 880 L195 915 L175 885 L200 850 L160 830 L125 815 L100 785 L150 770 L205 765 L230 730 L225 680 L200 650 L165 665 L140 625 L145 565 L185 525 L210 505 L195 455 L175 400 L140 345 L100 295 L80 250 L65 205 Z"/></svg>
<div style="left:0px;top:0px;width:1895px;height:24px;background:#E6E6E6;"></div>
<div style="left:28px;top:6px;width:51px;height:18px;background:#D2D2D2;"></div>
<div style="left:0px;top:24px;width:1807px;height:1px;background:#A0A0A0;"></div>
<div style="left:78px;top:6px;width:1px;height:18px;background:#ADADAD;"></div>
<div style="left:127px;top:6px;width:1px;height:18px;background:#ADADAD;"></div>
<div style="left:186px;top:6px;width:1px;height:18px;background:#ADADAD;"></div>
<div style="left:438px;top:6px;width:1px;height:18px;background:#ADADAD;"></div>
<div style="left:506px;top:6px;width:1px;height:18px;background:#ADADAD;"></div>
<div style="left:565px;top:6px;width:1px;height:18px;background:#ADADAD;"></div>
<div style="left:651px;top:6px;width:1px;height:18px;background:#ADADAD;"></div>
<div style="left:663px;top:6px;width:1px;height:18px;background:#ADADAD;"></div>
<div style="left:753px;top:6px;width:1px;height:18px;background:#ADADAD;"></div>
<div style="left:843px;top:6px;width:1px;height:18px;background:#ADADAD;"></div>
<div style="left:933px;top:6px;width:1px;height:18px;background:#ADADAD;"></div>
<div style="left:1023px;top:6px;width:1px;height:18px;background:#ADADAD;"></div>
<div style="left:1113px;top:6px;width:1px;height:18px;background:#ADADAD;"></div>
<div style="left:1203px;top:6px;width:1px;height:18px;background:#ADADAD;"></div>
<div style="left:1301px;top:6px;width:1px;height:18px;background:#ADADAD;"></div>
<div style="left:1399px;top:6px;width:1px;height:18px;background:#ADADAD;"></div>
<div style="left:1497px;top:6px;width:1px;height:18px;background:#ADADAD;"></div>
<div style="left:1595px;top:6px;width:1px;height:18px;background:#ADADAD;"></div>
<div style="left:1693px;top:6px;width:1px;height:18px;background:#ADADAD;"></div>
<div style="left:1791px;top:6px;width:1px;height:18px;background:#ADADAD;"></div>
<div style="left:1806px;top:6px;width:1px;height:18px;background:#ADADAD;"></div>
<div class="t" style="left:48.50px;top:7.22px;font-size:15px;color:#217346;">A</div>
<div class="t" style="left:98.00px;top:7.22px;font-size:15px;color:#000;">B</div>
<div class="t" style="left:151.58px;top:7.22px;font-size:15px;color:#000;">C</div>
<div class="t" style="left:307.08px;top:7.22px;font-size:15px;color:#000;">D</div>
<div class="t" style="left:467.50px;top:7.22px;font-size:15px;color:#000;">E</div>
<div class="t" style="left:531.42px;top:7.22px;font-size:15px;color:#000;">F</div>
<div class="t" style="left:602.67px;top:7.22px;font-size:15px;color:#000;">G</div>
<div class="t" style="left:652.08px;top:7.22px;font-size:15px;color:#000;">H</div>
<div class="t" style="left:706.42px;top:7.22px;font-size:15px;color:#000;">I</div>
<div class="t" style="left:794.75px;top:7.22px;font-size:15px;color:#000;">J</div>
<div class="t" style="left:883.50px;top:7.22px;font-size:15px;color:#000;">K</div>
<div class="t" style="left:974.33px;top:7.22px;font-size:15px;color:#000;">L</div>
<div class="t" style="left:1062.25px;top:7.22px;font-size:15px;color:#000;">M</div>
<div class="t" style="left:1153.08px;top:7.22px;font-size:15px;color:#000;">N</div>
<div class="t" style="left:1246.67px;top:7.22px;font-size:15px;color:#000;">O</div>
<div class="t" style="left:1345.50px;top:7.22px;font-size:15px;color:#000;">P</div>
<div class="t" style="left:1442.67px;top:7.22px;font-size:15px;color:#000;">Q</div>
<div class="t" style="left:1541.08px;top:7.22px;font-size:15px;color:#000;">R</div>
<div class="t" style="left:1639.50px;top:7.22px;font-size:15px;color:#000;">S</div>
<div class="t" style="left:1737.92px;top:7.22px;font-size:15px;color:#000;">T</div>
<div class="t" style="left:1793.58px;top:7.22px;font-size:15px;color:#000;">U</div>
<svg style="position:absolute;left:0;top:0" width="28" height="24"><path d="M14.5 20.8 L25 20.8 L25 10.3 Z" fill="#BDBDBD"/></svg>
<div style="left:0px;top:24px;width:28px;height:882px;background:#E6E6E6;"></div>
<div style="left:0px;top:25px;width:28px;height:34px;background:#D2D2D2;"></div>
<div style="left:0px;top:59px;width:28px;height:1px;background:#B0B0B0;"></div>
<div style="left:0;top:25px;width:28px;height:34px;overflow:hidden;"><div class="t" style="position:absolute;left:10.55px;top:13.75px;font-size:14.2px;color:#217346">1</div></div>
<div style="left:0px;top:94px;width:28px;height:1px;background:#B0B0B0;"></div>
<div style="left:0;top:60px;width:28px;height:34px;overflow:hidden;"><div class="t" style="position:absolute;left:10.55px;top:13.75px;font-size:14.2px;color:#000">2</div></div>
<div style="left:0px;top:117px;width:28px;height:1px;background:#B0B0B0;"></div>
<div style="left:0;top:95px;width:28px;height:22px;overflow:hidden;"><div class="t" style="position:absolute;left:10.55px;top:4.15px;font-size:14.2px;color:#000">3</div></div>
<div style="left:0px;top:140px;width:28px;height:1px;background:#B0B0B0;"></div>
<div style="left:0;top:118px;width:28px;height:22px;overflow:hidden;"><div class="t" style="position:absolute;left:10.55px;top:4.15px;font-size:14.2px;color:#000">4</div></div>
<div style="left:0px;top:163px;width:28px;height:1px;background:#B0B0B0;"></div>
<div style="left:0;top:141px;width:28px;height:22px;overflow:hidden;"><div class="t" style="position:absolute;left:10.55px;top:4.15px;font-size:14.2px;color:#000">5</div></div>
<div style="left:0px;top:186px;width:28px;height:1px;background:#B0B0B0;"></div>
<div style="left:0;top:164px;width:28px;height:22px;overflow:hidden;"><div class="t" style="position:absolute;left:10.55px;top:4.15px;font-size:14.2px;color:#000">6</div></div>
<div style="left:0px;top:209px;width:28px;height:1px;background:#B0B0B0;"></div>
<div style="left:0;top:187px;width:28px;height:22px;overflow:hidden;"><div class="t" style="position:absolute;left:10.55px;top:4.15px;font-size:14.2px;color:#000">7</div></div>
<div style="left:0px;top:228px;width:28px;height:1px;background:#B0B0B0;"></div>
<div style="left:0;top:210px;width:28px;height:18px;overflow:hidden;"><div class="t" style="position:absolute;left:10.55px;top:0.95px;font-size:14.2px;color:#000">8</div></div>
<div style="left:0px;top:258px;width:28px;height:1px;background:#B0B0B0;"></div>
<div style="left:0;top:229px;width:28px;height:29px;overflow:hidden;"><div class="t" style="position:absolute;left:10.55px;top:9.75px;font-size:14.2px;color:#000">9</div></div>
<div style="left:0px;top:265px;width:28px;height:1px;background:#B0B0B0;"></div>
<div style="left:0px;top:288px;width:28px;height:1px;background:#B0B0B0;"></div>
<div style="left:0;top:266px;width:28px;height:22px;overflow:hidden;"><div class="t" style="position:absolute;left:7.13px;top:4.15px;font-size:14.2px;color:#000">11</div></div>
<div style="left:0px;top:295px;width:28px;height:1px;background:#B0B0B0;"></div>
<div style="left:0px;top:318px;width:28px;height:1px;background:#B0B0B0;"></div>
<div style="left:0;top:296px;width:28px;height:22px;overflow:hidden;"><div class="t" style="position:absolute;left:6.60px;top:4.15px;font-size:14.2px;color:#000">13</div></div>
<div style="left:0px;top:326px;width:28px;height:1px;background:#B0B0B0;"></div>
<div style="left:0;top:319px;width:28px;height:7px;overflow:hidden;"><div class="t" style="position:absolute;left:6.60px;top:-9.05px;font-size:14.2px;color:#000">14</div></div>
<div style="left:0px;top:345px;width:28px;height:1px;background:#B0B0B0;"></div>
<div style="left:0;top:327px;width:28px;height:18px;overflow:hidden;"><div class="t" style="position:absolute;left:6.60px;top:0.95px;font-size:14.2px;color:#000">15</div></div>
<div style="left:0px;top:364px;width:28px;height:1px;background:#B0B0B0;"></div>
<div style="left:0;top:346px;width:28px;height:18px;overflow:hidden;"><div class="t" style="position:absolute;left:6.60px;top:0.95px;font-size:14.2px;color:#000">16</div></div>
<div style="left:0px;top:383px;width:28px;height:1px;background:#B0B0B0;"></div>
<div style="left:0;top:365px;width:28px;height:18px;overflow:hidden;"><div class="t" style="position:absolute;left:6.60px;top:0.95px;font-size:14.2px;color:#000">17</div></div>
<div style="left:0px;top:402px;width:28px;height:1px;background:#B0B0B0;"></div>
<div style="left:0;top:384px;width:28px;height:18px;overflow:hidden;"><div class="t" style="position:absolute;left:6.60px;top:0.95px;font-size:14.2px;color:#000">18</div></div>
<div style="left:0px;top:421px;width:28px;height:1px;background:#B0B0B0;"></div>
<div style="left:0;top:403px;width:28px;height:18px;overflow:hidden;"><div class="t" style="position:absolute;left:6.60px;top:0.95px;font-size:14.2px;color:#000">19</div></div>
<div style="left:0px;top:440px;width:28px;height:1px;background:#B0B0B0;"></div>
<div style="left:0;top:422px;width:28px;height:18px;overflow:hidden;"><div class="t" style="position:absolute;left:6.60px;top:0.95px;font-size:14.2px;color:#000">20</div></div>
<div style="left:0px;top:459px;width:28px;height:1px;background:#B0B0B0;"></div>
<div style="left:0;top:441px;width:28px;height:18px;overflow:hidden;"><div class="t" style="position:absolute;left:6.60px;top:0.95px;font-size:14.2px;color:#000">21</div></div>
<div style="left:0px;top:478px;width:28px;height:1px;background:#B0B0B0;"></div>
<div style="left:0;top:460px;width:28px;height:18px;overflow:hidden;"><div class="t" style="position:absolute;left:6.60px;top:0.95px;font-size:14.2px;color:#000">22</div></div>
<div style="left:0px;top:497px;width:28px;height:1px;background:#B0B0B0;"></div>
<div style="left:0;top:479px;width:28px;height:18px;overflow:hidden;"><div class="t" style="position:absolute;left:6.60px;top:0.95px;font-size:14.2px;color:#000">23</div></div>
<div style="left:0px;top:516px;width:28px;height:1px;background:#B0B0B0;"></div>
<div style="left:0;top:498px;width:28px;height:18px;overflow:hidden;"><div class="t" style="position:absolute;left:6.60px;top:0.95px;font-size:14.2px;color:#000">24</div></div>
<div style="left:0px;top:535px;width:28px;height:1px;background:#B0B0B0;"></div>
<div style="left:0;top:517px;width:28px;height:18px;overflow:hidden;"><div class="t" style="position:absolute;left:6.60px;top:0.95px;font-size:14.2px;color:#000">25</div></div>
<div style="left:0px;top:554px;width:28px;height:1px;background:#B0B0B0;"></div>
<div style="left:0;top:536px;width:28px;height:18px;overflow:hidden;"><div class="t" style="position:absolute;left:6.60px;top:0.95px;font-size:14.2px;color:#000">26</div></div>
<div style="left:0px;top:573px;width:28px;height:1px;background:#B0B0B0;"></div>
<div style="left:0;top:555px;width:28px;height:18px;overflow:hidden;"><div class="t" style="position:absolute;left:6.60px;top:0.95px;font-size:14.2px;color:#000">27</div></div>
<div style="left:0px;top:592px;width:28px;height:1px;background:#B0B0B0;"></div>
<div style="left:0;top:574px;width:28px;height:18px;overflow:hidden;"><div class="t" style="position:absolute;left:6.60px;top:0.95px;font-size:14.2px;color:#000">28</div></div>
<div style="left:0px;top:611px;width:28px;height:1px;background:#B0B0B0;"></div>
<div style="left:0;top:593px;width:28px;height:18px;overflow:hidden;"><div class="t" style="position:absolute;left:6.60px;top:0.95px;font-size:14.2px;color:#000">29</div></div>
<div style="left:0px;top:630px;width:28px;height:1px;background:#B0B0B0;"></div>
<div style="left:0;top:612px;width:28px;height:18px;overflow:hidden;"><div class="t" style="position:absolute;left:6.60px;top:0.95px;font-size:14.2px;color:#000">30</div></div>
<div style="left:0px;top:649px;width:28px;height:1px;background:#B0B0B0;"></div>
<div style="left:0;top:631px;width:28px;height:18px;overflow:hidden;"><div class="t" style="position:absolute;left:6.60px;top:0.95px;font-size:14.2px;color:#000">31</div></div>
<div style="left:0px;top:668px;width:28px;height:1px;background:#B0B0B0;"></div>
<div style="left:0;top:650px;width:28px;height:18px;overflow:hidden;"><div class="t" style="position:absolute;left:6.60px;top:0.95px;font-size:14.2px;color:#000">32</div></div>
<div style="left:0px;top:687px;width:28px;height:1px;background:#B0B0B0;"></div>
<div style="left:0;top:669px;width:28px;height:18px;overflow:hidden;"><div class="t" style="position:absolute;left:6.60px;top:0.95px;font-size:14.2px;color:#000">33</div></div>
<div style="left:0px;top:706px;width:28px;height:1px;background:#B0B0B0;"></div>
<div style="left:0;top:688px;width:28px;height:18px;overflow:hidden;"><div class="t" style="position:absolute;left:6.60px;top:0.95px;font-size:14.2px;color:#000">34</div></div>
<div style="left:0px;top:725px;width:28px;height:1px;background:#B0B0B0;"></div>
<div style="left:0;top:707px;width:28px;height:18px;overflow:hidden;"><div class="t" style="position:absolute;left:6.60px;top:0.95px;font-size:14.2px;color:#000">35</div></div>
<div style="left:0px;top:744px;width:28px;height:1px;background:#B0B0B0;"></div>
<div style="left:0;top:726px;width:28px;height:18px;overflow:hidden;"><div class="t" style="position:absolute;left:6.60px;top:0.95px;font-size:14.2px;color:#000">36</div></div>
<div style="left:0px;top:763px;width:28px;height:1px;background:#B0B0B0;"></div>
<div style="left:0;top:745px;width:28px;height:18px;overflow:hidden;"><div class="t" style="position:absolute;left:6.60px;top:0.95px;font-size:14.2px;color:#000">37</div></div>
<div style="left:0px;top:782px;width:28px;height:1px;background:#B0B0B0;"></div>
<div style="left:0;top:764px;width:28px;height:18px;overflow:hidden;"><div class="t" style="position:absolute;left:6.60px;top:0.95px;font-size:14.2px;color:#000">38</div></div>
<div style="left:0px;top:801px;width:28px;height:1px;background:#B0B0B0;"></div>
<div style="left:0;top:783px;width:28px;height:18px;overflow:hidden;"><div class="t" style="position:absolute;left:6.60px;top:0.95px;font-size:14.2px;color:#000">39</div></div>
<div style="left:0px;top:820px;width:28px;height:1px;background:#B0B0B0;"></div>
<div style="left:0;top:802px;width:28px;height:18px;overflow:hidden;"><div class="t" style="position:absolute;left:6.60px;top:0.95px;font-size:14.2px;color:#000">40</div></div>
<div style="left:0px;top:839px;width:28px;height:1px;background:#B0B0B0;"></div>
<div style="left:0;top:821px;width:28px;height:18px;overflow:hidden;"><div class="t" style="position:absolute;left:6.60px;top:0.95px;font-size:14.2px;color:#000">41</div></div>
<div style="left:0px;top:860px;width:28px;height:1px;background:#B0B0B0;"></div>
<div style="left:0;top:840px;width:28px;height:20px;overflow:hidden;"><div class="t" style="position:absolute;left:6.60px;top:2.55px;font-size:14.2px;color:#000">42</div></div>
<div style="left:0px;top:883px;width:28px;height:1px;background:#B0B0B0;"></div>
<div style="left:0;top:861px;width:28px;height:22px;overflow:hidden;"><div class="t" style="position:absolute;left:6.60px;top:4.15px;font-size:14.2px;color:#000">43</div></div>
<div style="left:0px;top:892px;width:28px;height:1px;background:#B0B0B0;"></div>
<div style="left:0;top:884px;width:28px;height:8px;overflow:hidden;"><div class="t" style="position:absolute;left:6.60px;top:-9.05px;font-size:14.2px;color:#000">44</div></div>
<div style="left:0;top:893px;width:28px;height:13px;overflow:hidden;"><div class="t" style="position:absolute;left:6.60px;top:4.15px;font-size:14.2px;color:#000">45</div></div>
<div style="left:28px;top:24px;width:1px;height:882px;background:#ABABAB;"></div>
<div style="left:0px;top:24px;width:29px;height:1px;background:#A0A0A0;"></div>
<div style="left:27px;top:23px;width:49px;height:34px;border:2px solid #217346;"></div>
<div style="left:75px;top:56px;width:6px;height:6px;background:#FFFFFF;"></div>
<div style="left:76px;top:57px;width:5px;height:5px;background:#217346;"></div>
<div style="left:1894px;top:24px;width:1px;height:882px;background:#A0A0A0;"></div>
<div style="left:1895px;top:0px;width:25px;height:906px;background:#E6E6E6;"></div>
<div style="left:1898px;top:157px;width:19px;height:730px;background:#F2F2F2;"></div>
<div style="left:1920px;top:0px;width:1px;height:966px;background:#000000;"></div>
<div style="left:1898px;top:8px;width:17px;height:17px;background:#fff;border:1px solid #999;"></div>
<svg style="position:absolute;left:1898px;top:8px" width="19" height="19"><path d="M5 10.8 L14 10.8 L9.5 5.9 Z" fill="#222"/></svg>
<div style="left:1898px;top:27px;width:17px;height:129px;background:#fff;border:1px solid #999;"></div>
<div style="left:1898px;top:887px;width:17px;height:17px;background:#fff;border:1px solid #999;"></div>
<svg style="position:absolute;left:1898px;top:887px" width="19" height="19"><path d="M5 8 L14 8 L9.5 12.9 Z" fill="#222"/></svg>
<div style="left:0px;top:906px;width:1921px;height:32px;background:#E6E6E6;"></div>
<div style="left:0px;top:906px;width:1920px;height:1px;background:#A0A0A0;"></div>
<div style="left:0px;top:938px;width:1920px;height:1px;background:#C8C8C8;"></div>
<svg style="position:absolute;left:28px;top:914px" width="50" height="18"><path d="M1.8 8.5 L7.2 3.9 L7.2 13.1 Z" fill="#C3C3C3"/><path d="M33.9 3.9 L39 8.5 L33.9 13.1 Z" fill="#C3C3C3"/></svg>
<div style="left:112px;top:910px;width:1px;height:24px;background:#A8A8A8;"></div>
<div style="left:182px;top:910px;width:1px;height:24px;background:#A8A8A8;"></div>
<div style="left:277px;top:910px;width:1px;height:24px;background:#A8A8A8;"></div>
<div style="left:365px;top:910px;width:1px;height:24px;background:#A8A8A8;"></div>
<div style="left:447px;top:910px;width:1px;height:24px;background:#A8A8A8;"></div>
<div style="left:700px;top:910px;width:1px;height:24px;background:#A8A8A8;"></div>
<div style="left:775px;top:910px;width:1px;height:24px;background:#A8A8A8;"></div>
<div style="left:830px;top:910px;width:1px;height:24px;background:#A8A8A8;"></div>
<div style="left:937px;top:910px;width:1px;height:24px;background:#A8A8A8;"></div>
<div style="left:1011px;top:910px;width:1px;height:24px;background:#A8A8A8;"></div>
<div style="left:1091px;top:910px;width:1px;height:24px;background:#A8A8A8;"></div>
<div style="left:1170px;top:910px;width:1px;height:24px;background:#A8A8A8;"></div>
<div style="left:115px;top:909px;width:66px;height:26px;background:#DDEBF7;"></div>
<div class="t" style="left:125.50px;top:910.87px;font-size:16.5px;color:#000;transform:scaleX(0.9838);transform-origin:0 0;">Cover</div>
<div style="left:184px;top:909px;width:92px;height:26px;background:#DDEBF7;"></div>
<div class="t" style="left:195.30px;top:910.87px;font-size:16.5px;color:#000;transform:scaleX(1.0433);transform-origin:0 0;">Contents</div>
<div style="left:279px;top:909px;width:85px;height:26px;background:#DDEBF7;"></div>
<div class="t" style="left:290.50px;top:910.87px;font-size:16.5px;color:#000;transform:scaleX(1.0720);transform-origin:0 0;">Method</div>
<div style="left:367px;top:909px;width:78px;height:26px;background:#FFFF00;"></div>
<div class="t" style="left:377.50px;top:910.87px;font-size:16.5px;color:#000;transform:scaleX(1.0394);transform-origin:0 0;">Manual</div>
<div style="left:450px;top:909px;width:69px;height:26px;background:#FFFF00;"></div>
<div class="t" style="left:460.50px;top:910.87px;font-size:16.5px;color:#000;transform:scaleX(1.0456);transform-origin:0 0;">Inputs</div>
<div style="left:520px;top:906px;width:67px;height:27px;background:#A8A8A8;"></div>
<div style="left:521px;top:906px;width:65px;height:27px;background:#FFFFFF;"></div>
<div style="left:524px;top:909px;width:59px;height:23px;background:linear-gradient(#fff 10%,#ECECEC 70%,#D6D6D6);"></div>
<div style="left:521px;top:933px;width:66px;height:2px;background:#1E6B3C;"></div>
<div class="t" style="left:533.75px;top:910.87px;font-size:16.5px;color:#217346;font-weight:bold;transform:scaleX(0.8914);transform-origin:0 0;">Calcs</div>
<div style="left:588px;top:909px;width:110px;height:26px;background:#00B0F0;"></div>
<div class="t" style="left:599.50px;top:910.87px;font-size:16.5px;color:#000;transform:scaleX(1.0184);transform-origin:0 0;">Statements</div>
<div style="left:703px;top:909px;width:70px;height:26px;background:#FFFF00;"></div>
<div class="t" style="left:713.20px;top:910.87px;font-size:16.5px;color:#000;transform:scaleX(0.9719);transform-origin:0 0;">WACC</div>
<div style="left:778px;top:909px;width:50px;height:26px;background:#00B0F0;"></div>
<div class="t" style="left:787.40px;top:910.87px;font-size:16.5px;color:#000;transform:scaleX(0.9499);transform-origin:0 0;">EVA</div>
<div style="left:834px;top:909px;width:101px;height:26px;background:#00B0F0;"></div>
<div class="t" style="left:845.40px;top:910.87px;font-size:16.5px;color:#000;transform:scaleX(0.9515);transform-origin:0 0;">BreakEven</div>
<div style="left:941px;top:909px;width:68px;height:26px;background:#00B0F0;"></div>
<div class="t" style="left:951.30px;top:910.87px;font-size:16.5px;color:#000;transform:scaleX(0.9622);transform-origin:0 0;">Ratios</div>
<div style="left:1014px;top:909px;width:75px;height:26px;background:#00B0F0;"></div>
<div class="t" style="left:1024.20px;top:910.87px;font-size:16.5px;color:#000;transform:scaleX(0.9869);transform-origin:0 0;">Graphs</div>
<div style="left:1093px;top:909px;width:75px;height:26px;background:#DDEBF7;"></div>
<div class="t" style="left:1104.40px;top:910.87px;font-size:16.5px;color:#000;transform:scaleX(0.9451);transform-origin:0 0;">Checks</div>
<svg style="position:absolute;left:1206px;top:912px" width="24" height="24"><circle cx="11.5" cy="11" r="9.5" fill="none" stroke="#808080" stroke-width="1.3"/><path d="M11.5 6 V16 M6.5 11 H16.5" stroke="#707070" stroke-width="1.5"/></svg>
<div style="left:1501px;top:917px;width:3px;height:3px;background:#B0B0B0;"></div>
<div style="left:1501px;top:922px;width:3px;height:3px;background:#B0B0B0;"></div>
<div style="left:1501px;top:927px;width:3px;height:3px;background:#B0B0B0;"></div>
<div style="left:1521px;top:913px;width:18px;height:18px;background:#fff;border:1px solid #A0A0A0;box-sizing:border-box;"></div>
<div style="left:1539px;top:913px;width:334px;height:19px;background:#fff;border:1px solid #A0A0A0;box-sizing:border-box;"></div>
<div style="left:1873px;top:913px;width:20px;height:19px;background:#fff;border:1px solid #A0A0A0;box-sizing:border-box;"></div>
<svg style="position:absolute;left:1521px;top:913px" width="19" height="19"><path d="M7 9.5 L11.5 5 L11.5 14 Z" fill="#222"/></svg>
<svg style="position:absolute;left:1873px;top:913px" width="20" height="19"><path d="M8.5 5 L13 9.5 L8.5 14 Z" fill="#222"/></svg>
<div style="left:0px;top:939px;width:1920px;height:27px;background:#F3F3F3;"></div>
<div style="left:0px;top:965px;width:1920px;height:1px;background:#9A9A9A;"></div>
<div class="t" style="left:14.70px;top:945.24px;font-size:13px;color:#262626;transform:scaleX(0.9447);transform-origin:0 0;">Ready</div>
<div class="t" style="left:71.50px;top:945.24px;font-size:13px;color:#262626;transform:scaleX(0.9502);transform-origin:0 0;">Calculate</div>
<svg style="position:absolute;left:140px;top:938px" width="75" height="28"><g fill="#555"><path d="M11.7 11 V20.7 H24.4 V7.6 H17.5" fill="none" stroke="#555" stroke-width="1.1"/><circle cx="13.5" cy="9.2" r="3.4"/><rect x="18.3" y="7.2" width="6.6" height="3.4"/><rect x="17.2" y="12" width="1.7" height="1"/><rect x="20.3" y="12" width="1.7" height="1"/><rect x="14.2" y="14.9" width="1.7" height="1"/><rect x="17.2" y="14.9" width="1.7" height="1"/><rect x="20.3" y="14.9" width="1.7" height="1"/><rect x="14.2" y="17.9" width="1.7" height="1"/><rect x="17.2" y="17.9" width="1.7" height="1"/><rect x="20.3" y="17.9" width="1.7" height="1"/></g><g fill="none" stroke="#555" stroke-width="1.1"><path d="M54.5 7.2 A7.2 7.2 0 0 0 55.7 21.5" stroke-dasharray="2.6 1.6"/><path d="M56.5 5.8 V14.6 M54.2 12.2 L56.5 14.6 L58.8 12.2"/><path d="M59.9 12.5 H64.8 M62.6 10.2 L64.8 12.5 L62.6 14.8"/><path d="M58.4 15.9 L67 23.6 M67.3 16 L58.5 23.3" stroke="#444" stroke-width="1.6"/></g></svg>
<div class="t" style="left:210.50px;top:945.05px;font-size:13.2px;color:#222;font-weight:bold;transform:scaleX(0.9605);transform-origin:0 0;">Accessibility: Investigate</div>
<svg style="position:absolute;left:1405px;top:940px" width="26" height="24"><rect x="4" y="3" width="19" height="12.6" rx="1.5" fill="#505050"/><rect x="8" y="19.5" width="5" height="1.6" fill="#505050"/><circle cx="17.4" cy="16.4" r="6.2" fill="#F3F3F3"/><g fill="#505050" transform="translate(17.4 16.4)"><circle r="4"/><rect x="-1.2" y="-5.4" width="2.4" height="10.8"/><rect x="-5.4" y="-1.2" width="10.8" height="2.4"/><rect x="-1.2" y="-5.4" width="2.4" height="10.8" transform="rotate(45)"/><rect x="-1.2" y="-5.4" width="2.4" height="10.8" transform="rotate(-45)"/></g><circle cx="17.4" cy="16.4" r="1.5" fill="#F3F3F3"/></svg>
<div class="t" style="left:1430.50px;top:945.05px;font-size:13.2px;color:#1E1E1E;transform:scaleX(0.9615);transform-origin:0 0;">Display Settings</div>
<div style="left:1547px;top:939px;width:50px;height:27px;background:#C6C6C6;"></div>
<svg style="position:absolute;left:1540px;top:938px" width="160" height="28"><g fill="none" stroke="#666" stroke-width="1.2"><rect x="24.5" y="6.5" width="15" height="15" fill="#D2D2D2"/><path d="M29.5 6.5 V21.5 M34.5 6.5 V21.5 M24.5 11.5 H39.5 M24.5 16.5 H39.5"/><rect x="73.5" y="6.5" width="16" height="14"/><rect x="77.5" y="8.5" width="8" height="10"/><path d="M79 11 H84 M79 13.5 H84 M79 16 H84"/><rect x="123.5" y="6.5" width="16" height="15"/><path d="M123.5 15.5 H133.5 V6.5 M128.5 6.5 V15.5"/></g></svg>
<div style="left:1703px;top:951px;width:10px;height:1px;background:#555;"></div>
<div style="left:1720px;top:952px;width:125px;height:1px;background:#555;"></div>
<div style="left:1773px;top:945px;width:6px;height:14px;background:#555;"></div>
<div style="left:1782px;top:948px;width:1px;height:9px;background:#555;"></div>
<div style="left:1851px;top:951px;width:10px;height:1px;background:#555;"></div>
<div style="left:1855px;top:946px;width:1px;height:11px;background:#555;"></div>
<div class="t" style="left:1877.00px;top:945.24px;font-size:13px;color:#1E1E1E;">90%</div>
</body></html>
